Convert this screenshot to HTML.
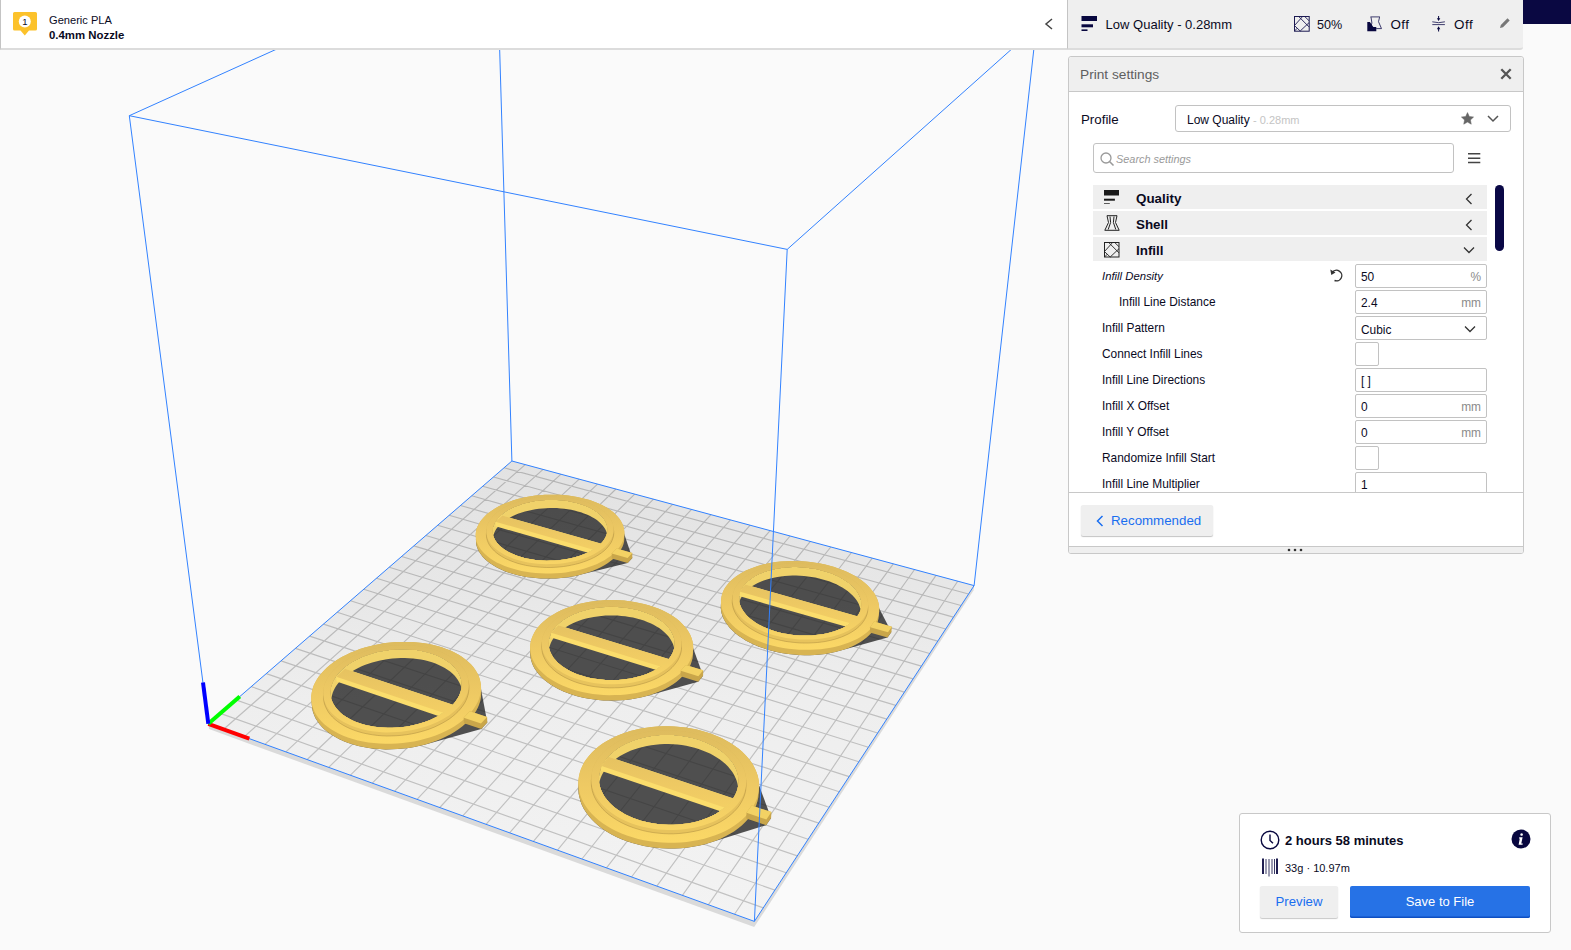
<!DOCTYPE html>
<html><head><meta charset="utf-8">
<style>
*{box-sizing:border-box;margin:0;padding:0}
html,body{width:1571px;height:950px;overflow:hidden;background:#fafafa;font-family:"Liberation Sans",sans-serif;color:#0a0a1e}
.abs{position:absolute}
#hdrL{left:0;top:0;width:1067px;height:50px;background:#fff;border-left:1px solid #c4c4c4;border-bottom:2px solid #dcdcdc}
#hdrR{left:1067px;top:0;width:456px;height:50px;background:#efefef;border-left:1px solid #c4c4c4;border-bottom:2px solid #dcdcdc;border-bottom-right-radius:3px}
#navy{left:1523px;top:0;width:48px;height:24px;background:#0a0842}
.t{position:absolute;white-space:nowrap;line-height:1}
#panel{left:1068px;top:56px;width:456px;height:498px;background:#fff;border:1px solid #c8c8c8;border-radius:3px}
#ptitle{left:0;top:0;width:454px;height:35px;background:#efefef;border-bottom:1px solid #c8c8c8;border-radius:3px 3px 0 0}
.field{position:absolute;border:1px solid #c2c2c2;border-radius:2px;background:#fff}
.cat{position:absolute;left:24px;width:394px;height:24px;background:#efefef}
.lab{position:absolute;font-size:11.9px;color:#0a0a1e;white-space:nowrap;line-height:1}
#card{left:1239px;top:813px;width:312px;height:120px;background:#fff;border:1px solid #c8c8c8;border-radius:3px}
</style></head><body>
<svg width="1571" height="950" viewBox="0 0 1571 950" style="position:absolute;left:0;top:0">
<defs><linearGradient id="plateg" x1="0" y1="461" x2="0" y2="921" gradientUnits="userSpaceOnUse"><stop offset="0" stop-color="#e2e2e2"/><stop offset="0.27" stop-color="#e7e7e7"/><stop offset="0.52" stop-color="#eeeeee"/><stop offset="1" stop-color="#f3f3f3"/></linearGradient>
<linearGradient id="rg0" x1="0" y1="494.7" x2="0" y2="573.5" gradientUnits="userSpaceOnUse"><stop offset="0" stop-color="#ddbb5e"/><stop offset="0.5" stop-color="#eec963"/><stop offset="1" stop-color="#fbd866"/></linearGradient><clipPath id="hc0"><path d="M600.7,543.8L602.4,542.0L603.8,540.1L605.0,538.2L606.0,536.3L606.7,534.3L607.2,532.3L607.5,530.3L607.5,528.3L607.2,526.3L606.7,524.4L606.0,522.5L605.0,520.6L603.8,518.7L602.4,516.9L600.7,515.2L598.9,513.5L596.8,511.9L594.6,510.4L592.2,509.0L589.6,507.6L586.8,506.4L583.9,505.2L580.9,504.2L577.7,503.2L574.4,502.4L571.1,501.7L567.6,501.1L564.1,500.6L560.5,500.2L556.9,500.0L553.3,499.9L549.6,499.9L545.9,500.0L542.3,500.3L538.7,500.6L535.1,501.1L531.6,501.8L528.2,502.5L524.8,503.3L521.6,504.3L518.4,505.4L515.4,506.5L512.5,507.8L509.8,509.2L507.3,510.6L504.9,512.1L502.7,513.8L500.7,515.4L498.9,517.2L497.3,519.0L495.9,520.8L494.8,522.7L493.9,524.7L493.2,526.6L492.8,528.6L492.6,530.6L492.6,532.6L492.9,534.6L493.5,536.5L494.3,538.5L495.3,540.4L496.6,542.3L498.1,544.1L499.9,545.9L501.8,547.6L504.0,549.2L506.4,550.7L509.0,552.2L511.8,553.5L514.7,554.8L517.8,555.9L521.1,557.0L524.5,557.9L528.0,558.7L531.6,559.3L535.3,559.9L539.0,560.3L542.9,560.5L546.7,560.7L550.6,560.6L554.4,560.5L558.3,560.2L562.1,559.8L565.8,559.2L569.5,558.6L573.0,557.8L576.5,556.8L579.9,555.8L583.1,554.6L586.2,553.3L589.1,552.0L591.8,550.5L594.3,548.9L596.6,547.3L598.8,545.6Z"/></clipPath><linearGradient id="rg1" x1="0" y1="561.0" x2="0" y2="649.8" gradientUnits="userSpaceOnUse"><stop offset="0" stop-color="#ddbb5e"/><stop offset="0.5" stop-color="#eec963"/><stop offset="1" stop-color="#fbd866"/></linearGradient><clipPath id="hc1"><path d="M857.2,616.6L858.5,614.6L859.6,612.4L860.5,610.3L861.0,608.1L861.4,605.9L861.4,603.6L861.2,601.4L860.7,599.1L860.0,596.9L859.0,594.7L857.8,592.5L856.3,590.4L854.6,588.3L852.7,586.3L850.5,584.4L848.2,582.5L845.6,580.7L842.9,579.0L840.0,577.3L837.0,575.8L833.7,574.4L830.4,573.1L826.9,571.9L823.4,570.9L819.7,570.0L816.0,569.1L812.2,568.5L808.3,567.9L804.5,567.5L800.6,567.3L796.7,567.1L792.8,567.1L788.9,567.3L785.1,567.6L781.4,568.0L777.7,568.6L774.2,569.3L770.7,570.1L767.3,571.0L764.1,572.1L761.0,573.3L758.1,574.6L755.3,576.0L752.8,577.6L750.4,579.2L748.2,580.9L746.2,582.7L744.5,584.6L743.0,586.6L741.7,588.6L740.7,590.7L739.9,592.9L739.4,595.0L739.1,597.2L739.1,599.5L739.3,601.7L739.8,604.0L740.6,606.2L741.6,608.4L742.9,610.6L744.5,612.8L746.3,614.9L748.3,616.9L750.5,618.9L753.0,620.8L755.7,622.7L758.6,624.4L761.7,626.0L764.9,627.6L768.4,629.0L771.9,630.3L775.6,631.5L779.4,632.5L783.4,633.4L787.3,634.1L791.4,634.7L795.5,635.2L799.6,635.5L803.7,635.6L807.8,635.6L811.9,635.4L815.9,635.1L819.8,634.6L823.7,634.0L827.4,633.3L831.0,632.3L834.5,631.3L837.8,630.1L841.0,628.8L843.9,627.4L846.7,625.8L849.3,624.1L851.6,622.4L853.7,620.5L855.5,618.6Z"/></clipPath><linearGradient id="rg2" x1="0" y1="600.1" x2="0" y2="695.2" gradientUnits="userSpaceOnUse"><stop offset="0" stop-color="#ddbb5e"/><stop offset="0.5" stop-color="#eec963"/><stop offset="1" stop-color="#fbd866"/></linearGradient><clipPath id="hc2"><path d="M668.1,659.7L669.9,657.5L671.3,655.3L672.6,652.9L673.5,650.6L674.2,648.2L674.6,645.8L674.7,643.4L674.6,641.0L674.2,638.6L673.5,636.3L672.6,634.0L671.4,631.7L670.0,629.5L668.3,627.3L666.4,625.2L664.2,623.2L661.9,621.3L659.3,619.4L656.6,617.7L653.7,616.1L650.6,614.6L647.3,613.2L643.9,612.0L640.4,610.8L636.8,609.8L633.0,609.0L629.2,608.2L625.3,607.7L621.4,607.2L617.4,607.0L613.4,606.8L609.4,606.8L605.4,607.0L601.4,607.3L597.5,607.7L593.6,608.3L589.8,609.1L586.1,610.0L582.5,611.0L579.0,612.1L575.6,613.4L572.3,614.8L569.3,616.3L566.4,618.0L563.6,619.7L561.1,621.6L558.8,623.5L556.7,625.5L554.8,627.6L553.2,629.8L551.7,632.0L550.6,634.3L549.7,636.6L549.1,639.0L548.7,641.4L548.6,643.8L548.8,646.2L549.2,648.6L549.9,650.9L550.9,653.3L552.1,655.6L553.6,657.9L555.4,660.1L557.4,662.2L559.7,664.2L562.2,666.2L564.9,668.1L567.8,669.8L570.9,671.5L574.3,673.0L577.7,674.4L581.4,675.6L585.2,676.7L589.1,677.7L593.1,678.5L597.2,679.1L601.3,679.6L605.6,679.9L609.8,680.1L614.0,680.1L618.3,679.9L622.5,679.6L626.6,679.0L630.7,678.4L634.7,677.5L638.6,676.6L642.4,675.4L646.0,674.2L649.5,672.8L652.8,671.2L655.9,669.6L658.8,667.8L661.5,665.9L663.9,663.9L666.1,661.9Z"/></clipPath><linearGradient id="rg3" x1="0" y1="641.9" x2="0" y2="743.8" gradientUnits="userSpaceOnUse"><stop offset="0" stop-color="#ddbb5e"/><stop offset="0.5" stop-color="#eec963"/><stop offset="1" stop-color="#fbd866"/></linearGradient><clipPath id="hc3"><path d="M451.7,705.9L453.9,703.6L455.8,701.1L457.5,698.6L458.9,696.1L460.0,693.6L460.8,691.0L461.4,688.4L461.6,685.9L461.6,683.3L461.4,680.8L460.8,678.3L460.0,675.8L458.9,673.5L457.5,671.2L455.9,668.9L454.0,666.8L451.9,664.7L449.6,662.7L447.1,660.9L444.3,659.2L441.4,657.5L438.3,656.1L435.0,654.7L431.5,653.5L428.0,652.4L424.2,651.5L420.4,650.7L416.5,650.1L412.5,649.7L408.4,649.4L404.3,649.2L400.2,649.2L396.0,649.4L391.8,649.7L387.7,650.2L383.5,650.9L379.5,651.6L375.5,652.6L371.5,653.7L367.7,654.9L364.0,656.3L360.4,657.8L356.9,659.4L353.6,661.2L350.5,663.0L347.6,665.0L344.8,667.1L342.3,669.2L340.0,671.5L337.9,673.8L336.0,676.2L334.4,678.7L333.1,681.2L332.0,683.7L331.2,686.2L330.7,688.8L330.4,691.4L330.4,694.0L330.7,696.5L331.3,699.0L332.2,701.5L333.4,703.9L334.8,706.3L336.5,708.6L338.5,710.8L340.7,712.9L343.2,714.9L345.9,716.8L348.9,718.5L352.1,720.2L355.4,721.7L359.0,723.0L362.7,724.2L366.6,725.2L370.6,726.1L374.7,726.8L379.0,727.3L383.3,727.6L387.6,727.8L392.1,727.8L396.5,727.6L400.9,727.2L405.3,726.7L409.6,726.0L413.9,725.1L418.1,724.0L422.2,722.8L426.2,721.4L430.1,719.9L433.7,718.3L437.3,716.5L440.6,714.6L443.7,712.6L446.6,710.4L449.3,708.2Z"/></clipPath><linearGradient id="rg4" x1="0" y1="726.2" x2="0" y2="842.8" gradientUnits="userSpaceOnUse"><stop offset="0" stop-color="#ddbb5e"/><stop offset="0.5" stop-color="#eec963"/><stop offset="1" stop-color="#fbd866"/></linearGradient><clipPath id="hc4"><path d="M732.2,799.7L734.0,797.0L735.5,794.2L736.7,791.4L737.6,788.5L738.2,785.5L738.6,782.6L738.6,779.7L738.3,776.7L737.7,773.8L736.8,770.9L735.7,768.1L734.2,765.3L732.5,762.6L730.6,759.9L728.3,757.4L725.9,754.9L723.2,752.6L720.2,750.3L717.1,748.2L713.8,746.2L710.3,744.4L706.6,742.7L702.8,741.2L698.9,739.8L694.8,738.6L690.6,737.5L686.4,736.7L682.1,736.0L677.7,735.4L673.3,735.1L668.8,734.9L664.4,734.9L660.0,735.1L655.6,735.5L651.3,736.1L647.1,736.8L642.9,737.7L638.8,738.8L634.9,740.0L631.0,741.4L627.4,743.0L623.9,744.7L620.5,746.5L617.4,748.5L614.5,750.7L611.8,752.9L609.3,755.3L607.0,757.8L605.1,760.3L603.3,763.0L601.9,765.7L600.7,768.5L599.8,771.4L599.2,774.3L598.9,777.2L598.9,780.1L599.2,783.1L599.8,786.0L600.7,788.9L601.9,791.8L603.3,794.6L605.1,797.4L607.2,800.1L609.5,802.7L612.1,805.3L615.0,807.7L618.1,810.0L621.4,812.1L624.9,814.2L628.7,816.0L632.6,817.7L636.7,819.3L641.0,820.7L645.4,821.8L649.8,822.8L654.4,823.6L659.1,824.2L663.8,824.6L668.5,824.8L673.2,824.8L677.9,824.6L682.6,824.1L687.2,823.5L691.7,822.7L696.1,821.7L700.3,820.5L704.4,819.1L708.4,817.5L712.2,815.8L715.7,813.9L719.1,811.8L722.2,809.6L725.1,807.3L727.7,804.9L730.1,802.3Z"/></clipPath></defs>
<path d="M208.3,723.8L511.9,461.0L974.1,585.6L973.5,590.5L754.2,927.1L209.0,729.1Z" fill="#dadada"/>
<path d="M208.3,723.8L754.4,921.4L974.1,585.6L511.9,461.0Z" fill="url(#plateg)"/>
<path d="M223.6,729.3L525.2,464.6M220.3,713.4L763.3,907.9M244.2,736.7L543.1,469.4M235.9,699.9L774.9,890.1M264.9,744.3L561.0,474.2M251.3,686.6L786.2,872.8M285.9,751.9L579.2,479.1M266.3,673.6L797.3,855.9M307.2,759.5L597.5,484.1M281.0,660.9L808.1,839.3M328.7,767.3L616.0,489.0M295.5,648.4L818.7,823.1M350.4,775.2L634.7,494.1M309.6,636.1L829.1,807.3M372.3,783.1L653.5,499.1M323.5,624.1L839.2,791.8M394.6,791.2L672.5,504.3M337.2,612.3L849.1,776.6M417.0,799.3L691.6,509.4M350.5,600.7L858.8,761.8M439.8,807.5L711.0,514.6M363.7,589.3L868.3,747.3M462.8,815.9L730.5,519.9M376.5,578.2L877.6,733.0M486.0,824.3L750.2,525.2M389.2,567.2L886.8,719.1M509.6,832.8L770.1,530.6M401.6,556.5L895.7,705.4M533.4,841.4L790.1,536.0M413.8,545.9L904.4,692.1M557.5,850.2L810.4,541.4M425.8,535.5L913.0,678.9M581.9,859.0L830.8,547.0M437.6,525.3L921.4,666.1M606.5,867.9L851.5,552.5M449.1,515.3L929.6,653.5M631.5,877.0L872.3,558.1M460.5,505.5L937.7,641.1M656.8,886.1L893.3,563.8M471.7,495.8L945.7,629.0M682.4,895.4L914.6,569.5M482.7,486.3L953.4,617.1M708.3,904.8L936.0,575.3M493.5,477.0L961.1,605.5M734.5,914.2L957.7,581.2M504.1,467.8L968.5,594.0" stroke="#000" stroke-opacity="0.2" stroke-width="1.15" fill="none"/>
<path d="M486.7,519.6L484.3,521.8L482.3,524.2L480.5,526.6L479.0,529.0L477.7,531.5L476.8,534.1L476.2,536.7L476.0,539.2L476.0,541.8L476.3,544.4L477.0,547.0L478.0,549.5L479.3,552.0L481.0,554.5L482.9,556.9L485.1,559.2L487.7,561.4L490.5,563.5L493.6,565.5L496.9,567.5L500.5,569.2L504.3,570.9L508.3,572.4L512.6,573.8L517.0,575.0L521.5,576.0L526.2,576.9L531.0,577.6L535.9,578.1L540.9,578.5L545.9,578.6L550.9,578.6L555.9,578.4L560.9,578.0L565.8,577.5L570.7,576.8L575.5,575.9L580.1,574.8L627.6,563.0L632.3,558.1L623.3,531.2L622.3,528.7L621.0,526.2L619.4,523.8L617.5,521.5L615.4,519.3L613.0,517.1L610.3,515.0L607.4,513.1L604.3,511.2L600.9,509.5L597.4,507.9L593.7,506.4L589.8,505.1L585.7,503.8L581.5,502.8L577.2,501.9L572.7,501.1L568.2,500.5L563.6,500.0L559.0,499.7L554.3,499.6L549.6,499.6L544.9,499.7L540.2,500.1L535.6,500.6L531.0,501.2L526.5,502.0L522.1,502.9L517.8,504.0L513.6,505.2L509.6,506.6L505.7,508.1L502.0,509.7L498.5,511.5L495.2,513.4L492.1,515.3L489.3,517.4Z" fill="#242424" fill-opacity="0.79"/>
<path d="M475.7,534.2L476.0,531.6L476.6,529.1L477.5,526.5L478.8,524.0L480.3,521.6L482.1,519.2L484.1,516.9L486.5,514.6L489.1,512.5L492.0,510.4L495.0,508.4L498.4,506.5L501.9,504.8L505.6,503.2L509.5,501.7L513.5,500.3L517.7,499.1L522.0,498.0L526.4,497.1L530.9,496.3L535.5,495.6L540.1,495.2L544.8,494.8L549.5,494.7L554.2,494.7L558.9,494.8L563.5,495.1L568.1,495.6L572.7,496.2L577.1,496.9L581.4,497.9L585.6,498.9L589.7,500.1L593.6,501.5L597.4,502.9L600.9,504.6L604.3,506.3L607.4,508.1L610.3,510.1L613.0,512.1L615.4,514.3L617.5,516.5L619.4,518.8L621.0,521.2L622.3,523.7L623.3,526.2L623.9,528.7L624.3,531.3L624.4,533.8L624.3,538.9L624.1,541.4L623.5,544.0L622.6,546.6L621.3,549.1L619.8,551.7L618.0,554.1L615.8,556.5L613.4,558.8L610.6,561.1L607.6,563.2L604.4,565.3L600.8,567.2L597.1,569.0L593.1,570.7L589.0,572.2L584.6,573.6L580.1,574.8L575.5,575.9L570.7,576.8L565.8,577.5L560.9,578.0L555.9,578.4L550.9,578.6L545.9,578.6L540.9,578.5L535.9,578.1L531.0,577.6L526.2,576.9L521.5,576.0L517.0,575.0L512.6,573.8L508.3,572.4L504.3,570.9L500.5,569.2L496.9,567.5L493.6,565.5L490.5,563.5L487.7,561.4L485.1,559.2L482.9,556.9L481.0,554.5L479.3,552.0L478.0,549.5L477.0,547.0L476.3,544.4L476.0,541.8L475.8,536.8Z M600.7,543.8L602.4,542.0L603.8,540.1L605.0,538.2L606.0,536.3L606.7,534.3L607.2,532.3L607.5,530.3L607.5,528.3L607.2,526.3L606.7,524.4L606.0,522.5L605.0,520.6L603.8,518.7L602.4,516.9L600.7,515.2L598.9,513.5L596.8,511.9L594.6,510.4L592.2,509.0L589.6,507.6L586.8,506.4L583.9,505.2L580.9,504.2L577.7,503.2L574.4,502.4L571.1,501.7L567.6,501.1L564.1,500.6L560.5,500.2L556.9,500.0L553.3,499.9L549.6,499.9L545.9,500.0L542.3,500.3L538.7,500.6L535.1,501.1L531.6,501.8L528.2,502.5L524.8,503.3L521.6,504.3L518.4,505.4L515.4,506.5L512.5,507.8L509.8,509.2L507.3,510.6L504.9,512.1L502.7,513.8L500.7,515.4L498.9,517.2L497.3,519.0L495.9,520.8L494.8,522.7L493.9,524.7L493.2,526.6L492.8,528.6L492.6,530.6L492.6,532.6L492.9,534.6L493.5,536.5L494.3,538.5L495.3,540.4L496.6,542.3L498.1,544.1L499.9,545.9L501.8,547.6L504.0,549.2L506.4,550.7L509.0,552.2L511.8,553.5L514.7,554.8L517.8,555.9L521.1,557.0L524.5,557.9L528.0,558.7L531.6,559.3L535.3,559.9L539.0,560.3L542.9,560.5L546.7,560.7L550.6,560.6L554.4,560.5L558.3,560.2L562.1,559.8L565.8,559.2L569.5,558.6L573.0,557.8L576.5,556.8L579.9,555.8L583.1,554.6L586.2,553.3L589.1,552.0L591.8,550.5L594.3,548.9L596.6,547.3L598.8,545.6Z" fill-rule="evenodd" fill="#d8b452"/>
<path d="M615.8,551.4L618.0,549.0L619.8,546.6L621.4,544.1L622.6,541.6L623.5,539.0L624.1,536.4L624.4,533.8L624.3,531.3L623.9,528.7L623.3,526.2L622.3,523.7L621.0,521.2L619.4,518.8L617.5,516.5L615.4,514.3L613.0,512.1L610.3,510.1L607.4,508.1L604.3,506.3L600.9,504.6L597.4,502.9L593.6,501.5L589.7,500.1L585.6,498.9L581.4,497.9L577.1,496.9L572.7,496.2L568.1,495.6L563.5,495.1L558.9,494.8L554.2,494.7L549.5,494.7L544.8,494.8L540.1,495.2L535.5,495.6L530.9,496.3L526.4,497.1L522.0,498.0L517.7,499.1L513.5,500.3L509.5,501.7L505.6,503.2L501.9,504.8L498.4,506.5L495.0,508.4L492.0,510.4L489.1,512.5L486.5,514.6L484.1,516.9L482.1,519.2L480.3,521.6L478.8,524.0L477.5,526.5L476.6,529.1L476.0,531.6L475.7,534.2L475.8,536.8L476.1,539.4L476.8,541.9L477.8,544.5L479.1,547.0L480.8,549.4L482.7,551.8L484.9,554.1L487.5,556.3L490.3,558.4L493.4,560.4L496.7,562.4L500.3,564.1L504.1,565.8L508.2,567.3L512.4,568.6L516.8,569.8L521.4,570.9L526.1,571.8L530.9,572.5L535.8,573.0L540.7,573.3L545.8,573.5L550.8,573.5L555.8,573.3L560.8,572.9L565.8,572.4L570.6,571.6L575.4,570.7L580.1,569.7L584.6,568.5L588.9,567.1L593.1,565.5L597.1,563.9L600.8,562.1L604.4,560.2L607.6,558.1L610.6,556.0L613.4,553.7Z M600.7,543.8L602.4,542.0L603.8,540.1L605.0,538.2L606.0,536.3L606.7,534.3L607.2,532.3L607.5,530.3L607.5,528.3L607.2,526.3L606.7,524.4L606.0,522.5L605.0,520.6L603.8,518.7L602.4,516.9L600.7,515.2L598.9,513.5L596.8,511.9L594.6,510.4L592.2,509.0L589.6,507.6L586.8,506.4L583.9,505.2L580.9,504.2L577.7,503.2L574.4,502.4L571.1,501.7L567.6,501.1L564.1,500.6L560.5,500.2L556.9,500.0L553.3,499.9L549.6,499.9L545.9,500.0L542.3,500.3L538.7,500.6L535.1,501.1L531.6,501.8L528.2,502.5L524.8,503.3L521.6,504.3L518.4,505.4L515.4,506.5L512.5,507.8L509.8,509.2L507.3,510.6L504.9,512.1L502.7,513.8L500.7,515.4L498.9,517.2L497.3,519.0L495.9,520.8L494.8,522.7L493.9,524.7L493.2,526.6L492.8,528.6L492.6,530.6L492.6,532.6L492.9,534.6L493.5,536.5L494.3,538.5L495.3,540.4L496.6,542.3L498.1,544.1L499.9,545.9L501.8,547.6L504.0,549.2L506.4,550.7L509.0,552.2L511.8,553.5L514.7,554.8L517.8,555.9L521.1,557.0L524.5,557.9L528.0,558.7L531.6,559.3L535.3,559.9L539.0,560.3L542.9,560.5L546.7,560.7L550.6,560.6L554.4,560.5L558.3,560.2L562.1,559.8L565.8,559.2L569.5,558.6L573.0,557.8L576.5,556.8L579.9,555.8L583.1,554.6L586.2,553.3L589.1,552.0L591.8,550.5L594.3,548.9L596.6,547.3L598.8,545.6Z" fill-rule="evenodd" fill="url(#rg0)"/>
<path d="M486.3,530.7L486.5,528.5L487.0,526.3L487.8,524.2L488.8,522.0L490.1,519.9L491.6,517.9L493.4,515.9L495.4,513.9L497.6,512.1L500.0,510.3L502.7,508.6L505.5,507.0L508.5,505.5L511.7,504.1L515.0,502.8L518.5,501.6L522.1,500.6L525.8,499.6L529.6,498.8L533.5,498.1L537.5,497.6L541.5,497.2L545.5,496.9L549.5,496.8L553.6,496.7L557.6,496.9L561.6,497.1L565.6,497.5L569.5,498.1L573.3,498.7L577.0,499.5L580.7,500.4L584.2,501.5L587.5,502.6L590.7,503.9L593.8,505.3L596.7,506.8L599.4,508.4L601.8,510.0L604.1,511.8L606.2,513.7L608.0,515.6L609.6,517.6L610.9,519.6L612.0,521.7L612.8,523.8L613.4,526.0L613.7,528.2L613.7,530.4L613.7,533.7L613.5,535.9L612.9,538.1L612.1,540.3L611.1,542.5L609.7,544.6L608.1,546.7L606.3,548.7L604.2,550.7L601.8,552.6L599.2,554.4L596.4,556.2L593.4,557.8L590.2,559.3L586.8,560.7L583.2,562.0L579.5,563.2L575.7,564.2L571.7,565.1L567.6,565.9L563.5,566.5L559.2,567.0L555.0,567.3L550.7,567.5L546.4,567.5L542.1,567.3L537.9,567.0L533.7,566.6L529.6,566.0L525.6,565.3L521.7,564.4L517.9,563.4L514.3,562.2L510.9,560.9L507.6,559.5L504.5,558.0L501.7,556.4L499.0,554.7L496.6,552.9L494.4,551.0L492.5,549.0L490.8,547.0L489.4,544.9L488.3,542.8L487.4,540.6L486.8,538.4L486.5,536.2L486.3,532.9Z M600.7,543.8L602.4,542.0L603.8,540.1L605.0,538.2L606.0,536.3L606.7,534.3L607.2,532.3L607.5,530.3L607.5,528.3L607.2,526.3L606.7,524.4L606.0,522.5L605.0,520.6L603.8,518.7L602.4,516.9L600.7,515.2L598.9,513.5L596.8,511.9L594.6,510.4L592.2,509.0L589.6,507.6L586.8,506.4L583.9,505.2L580.9,504.2L577.7,503.2L574.4,502.4L571.1,501.7L567.6,501.1L564.1,500.6L560.5,500.2L556.9,500.0L553.3,499.9L549.6,499.9L545.9,500.0L542.3,500.3L538.7,500.6L535.1,501.1L531.6,501.8L528.2,502.5L524.8,503.3L521.6,504.3L518.4,505.4L515.4,506.5L512.5,507.8L509.8,509.2L507.3,510.6L504.9,512.1L502.7,513.8L500.7,515.4L498.9,517.2L497.3,519.0L495.9,520.8L494.8,522.7L493.9,524.7L493.2,526.6L492.8,528.6L492.6,530.6L492.6,532.6L492.9,534.6L493.5,536.5L494.3,538.5L495.3,540.4L496.6,542.3L498.1,544.1L499.9,545.9L501.8,547.6L504.0,549.2L506.4,550.7L509.0,552.2L511.8,553.5L514.7,554.8L517.8,555.9L521.1,557.0L524.5,557.9L528.0,558.7L531.6,559.3L535.3,559.9L539.0,560.3L542.9,560.5L546.7,560.7L550.6,560.6L554.4,560.5L558.3,560.2L562.1,559.8L565.8,559.2L569.5,558.6L573.0,557.8L576.5,556.8L579.9,555.8L583.1,554.6L586.2,553.3L589.1,552.0L591.8,550.5L594.3,548.9L596.6,547.3L598.8,545.6Z" fill-rule="evenodd" fill="#d9b556" fill-opacity="0.55"/>
<path d="M606.3,548.7L608.1,546.7L609.7,544.6L611.1,542.5L612.1,540.3L612.9,538.1L613.5,535.9L613.7,533.7L613.7,531.5L613.4,529.3L612.8,527.1L612.0,525.0L610.9,522.9L609.6,520.8L608.0,518.8L606.2,516.9L604.1,515.0L601.9,513.3L599.4,511.6L596.7,510.0L593.8,508.5L590.8,507.1L587.5,505.8L584.2,504.7L580.7,503.6L577.1,502.7L573.3,501.9L569.5,501.3L565.6,500.7L561.7,500.3L557.7,500.1L553.6,499.9L549.6,500.0L545.6,500.1L541.5,500.4L537.5,500.8L533.6,501.4L529.7,502.0L525.9,502.8L522.2,503.8L518.6,504.8L515.1,506.0L511.8,507.3L508.6,508.7L505.6,510.2L502.8,511.8L500.1,513.5L497.7,515.3L495.5,517.2L493.5,519.1L491.7,521.1L490.2,523.2L488.9,525.3L487.9,527.4L487.1,529.6L486.6,531.8L486.4,534.0L486.5,536.2L486.8,538.4L487.4,540.6L488.3,542.8L489.4,544.9L490.8,547.0L492.5,549.0L494.4,551.0L496.6,552.9L499.0,554.7L501.7,556.4L504.5,558.0L507.6,559.5L510.9,560.9L514.3,562.2L517.9,563.4L521.7,564.4L525.6,565.3L529.6,566.0L533.7,566.6L537.9,567.0L542.1,567.3L546.4,567.5L550.7,567.5L555.0,567.3L559.2,567.0L563.5,566.5L567.6,565.9L571.7,565.1L575.7,564.2L579.5,563.2L583.2,562.0L586.8,560.7L590.2,559.3L593.4,557.8L596.4,556.2L599.2,554.4L601.8,552.6L604.2,550.7Z" fill="none" stroke="#a88a3e" stroke-width="0.8" stroke-opacity="0.6"/>
<path d="M606.3,545.4L608.1,543.4L609.7,541.3L611.1,539.2L612.1,537.0L612.9,534.8L613.5,532.6L613.7,530.4L613.7,528.2L613.4,526.0L612.8,523.8L612.0,521.7L610.9,519.6L609.6,517.6L608.0,515.6L606.2,513.7L604.1,511.8L601.8,510.0L599.4,508.4L596.7,506.8L593.8,505.3L590.7,503.9L587.5,502.6L584.2,501.5L580.7,500.4L577.0,499.5L573.3,498.7L569.5,498.1L565.6,497.5L561.6,497.1L557.6,496.9L553.6,496.7L549.5,496.8L545.5,496.9L541.5,497.2L537.5,497.6L533.5,498.1L529.6,498.8L525.8,499.6L522.1,500.6L518.5,501.6L515.0,502.8L511.7,504.1L508.5,505.5L505.5,507.0L502.7,508.6L500.0,510.3L497.6,512.1L495.4,513.9L493.4,515.9L491.6,517.9L490.1,519.9L488.8,522.0L487.8,524.2L487.0,526.3L486.5,528.5L486.3,530.7L486.3,532.9L486.7,535.1L487.3,537.3L488.1,539.5L489.3,541.6L490.7,543.7L492.4,545.7L494.3,547.7L496.5,549.6L498.9,551.4L501.5,553.1L504.4,554.7L507.5,556.2L510.8,557.6L514.2,558.9L517.8,560.0L521.6,561.1L525.5,561.9L529.5,562.7L533.6,563.3L537.8,563.7L542.1,564.0L546.3,564.2L550.6,564.1L554.9,564.0L559.2,563.7L563.4,563.2L567.6,562.6L571.6,561.8L575.6,560.9L579.5,559.9L583.2,558.7L586.8,557.4L590.2,556.0L593.4,554.5L596.4,552.8L599.2,551.1L601.8,549.3L604.2,547.4Z M600.7,543.8L602.4,542.0L603.8,540.1L605.0,538.2L606.0,536.3L606.7,534.3L607.2,532.3L607.5,530.3L607.5,528.3L607.2,526.3L606.7,524.4L606.0,522.5L605.0,520.6L603.8,518.7L602.4,516.9L600.7,515.2L598.9,513.5L596.8,511.9L594.6,510.4L592.2,509.0L589.6,507.6L586.8,506.4L583.9,505.2L580.9,504.2L577.7,503.2L574.4,502.4L571.1,501.7L567.6,501.1L564.1,500.6L560.5,500.2L556.9,500.0L553.3,499.9L549.6,499.9L545.9,500.0L542.3,500.3L538.7,500.6L535.1,501.1L531.6,501.8L528.2,502.5L524.8,503.3L521.6,504.3L518.4,505.4L515.4,506.5L512.5,507.8L509.8,509.2L507.3,510.6L504.9,512.1L502.7,513.8L500.7,515.4L498.9,517.2L497.3,519.0L495.9,520.8L494.8,522.7L493.9,524.7L493.2,526.6L492.8,528.6L492.6,530.6L492.6,532.6L492.9,534.6L493.5,536.5L494.3,538.5L495.3,540.4L496.6,542.3L498.1,544.1L499.9,545.9L501.8,547.6L504.0,549.2L506.4,550.7L509.0,552.2L511.8,553.5L514.7,554.8L517.8,555.9L521.1,557.0L524.5,557.9L528.0,558.7L531.6,559.3L535.3,559.9L539.0,560.3L542.9,560.5L546.7,560.7L550.6,560.6L554.4,560.5L558.3,560.2L562.1,559.8L565.8,559.2L569.5,558.6L573.0,557.8L576.5,556.8L579.9,555.8L583.1,554.6L586.2,553.3L589.1,552.0L591.8,550.5L594.3,548.9L596.6,547.3L598.8,545.6Z" fill-rule="evenodd" fill="url(#rg0)"/>
<path d="M600.7,543.8L602.4,542.0L603.8,540.1L605.0,538.2L606.0,536.3L606.7,534.3L607.2,532.3L607.5,530.3L607.5,528.3L607.2,526.3L606.7,524.4L606.0,522.5L605.0,520.6L603.8,518.7L602.4,516.9L600.7,515.2L598.9,513.5L596.8,511.9L594.6,510.4L592.2,509.0L589.6,507.6L586.8,506.4L583.9,505.2L580.9,504.2L577.7,503.2L574.4,502.4L571.1,501.7L567.6,501.1L564.1,500.6L560.5,500.2L556.9,500.0L553.3,499.9L549.6,499.9L545.9,500.0L542.3,500.3L538.7,500.6L535.1,501.1L531.6,501.8L528.2,502.5L524.8,503.3L521.6,504.3L518.4,505.4L515.4,506.5L512.5,507.8L509.8,509.2L507.3,510.6L504.9,512.1L502.7,513.8L500.7,515.4L498.9,517.2L497.3,519.0L495.9,520.8L494.8,522.7L493.9,524.7L493.2,526.6L492.8,528.6L492.6,530.6L492.6,532.6L492.9,534.6L493.5,536.5L494.3,538.5L495.3,540.4L496.6,542.3L498.1,544.1L499.9,545.9L501.8,547.6L504.0,549.2L506.4,550.7L509.0,552.2L511.8,553.5L514.7,554.8L517.8,555.9L521.1,557.0L524.5,557.9L528.0,558.7L531.6,559.3L535.3,559.9L539.0,560.3L542.9,560.5L546.7,560.7L550.6,560.6L554.4,560.5L558.3,560.2L562.1,559.8L565.8,559.2L569.5,558.6L573.0,557.8L576.5,556.8L579.9,555.8L583.1,554.6L586.2,553.3L589.1,552.0L591.8,550.5L594.3,548.9L596.6,547.3L598.8,545.6Z M600.7,552.2L602.4,550.4L603.8,548.5L605.0,546.5L606.0,544.6L606.8,542.6L607.2,540.6L607.5,538.6L607.5,536.6L607.2,534.6L606.7,532.7L606.0,530.7L605.0,528.8L603.8,527.0L602.4,525.2L600.8,523.4L598.9,521.7L596.9,520.1L594.6,518.6L592.2,517.2L589.6,515.8L586.9,514.5L584.0,513.4L581.0,512.3L577.8,511.4L574.5,510.5L571.2,509.8L567.7,509.2L564.2,508.7L560.6,508.4L557.0,508.1L553.4,508.0L549.7,508.0L546.1,508.2L542.5,508.4L538.9,508.8L535.3,509.3L531.8,509.9L528.4,510.7L525.0,511.5L521.8,512.5L518.6,513.5L515.6,514.7L512.8,516.0L510.1,517.4L507.5,518.8L505.1,520.4L503.0,522.0L501.0,523.7L499.2,525.4L497.6,527.2L496.2,529.1L495.1,531.0L494.2,532.9L493.5,534.9L493.1,536.9L492.9,538.9L492.9,540.9L493.2,542.9L493.8,544.9L494.6,546.8L495.6,548.7L496.9,550.6L498.4,552.5L500.1,554.2L502.1,555.9L504.3,557.6L506.7,559.1L509.3,560.6L512.0,561.9L515.0,563.2L518.1,564.3L521.3,565.4L524.7,566.3L528.2,567.1L531.8,567.8L535.5,568.3L539.2,568.7L543.0,569.0L546.9,569.1L550.7,569.1L554.6,568.9L558.4,568.6L562.2,568.2L565.9,567.7L569.6,567.0L573.1,566.2L576.6,565.2L580.0,564.2L583.2,563.0L586.2,561.7L589.1,560.4L591.8,558.9L594.4,557.3L596.7,555.7L598.8,554.0Z" fill-rule="evenodd" fill="#f0d26a" clip-path="url(#hc0)"/>
<g clip-path="url(#hc0)"><path d="M495.5,521.8L502.4,515.6L605.9,545.0L605.9,549.5L599.4,556.0L495.6,526.3Z" fill="#fbdd6c"/><path d="M495.5,521.8L599.4,551.5L605.9,545.0L502.4,515.6Z" fill="url(#rg0)"/></g>
<path d="M611.8,553.4L616.6,548.5L632.3,553.0L632.3,558.1L627.6,563.0L611.8,558.5Z" fill="#c9a64a"/><path d="M611.8,553.4L627.6,557.9L632.3,553.0L616.6,548.5Z" fill="#f3d264"/>
<path d="M728.1,588.6L726.1,591.1L724.4,593.7L723.1,596.4L722.0,599.2L721.3,602.0L720.9,604.9L720.8,607.8L721.1,610.7L721.7,613.6L722.7,616.5L724.0,619.4L725.6,622.3L727.6,625.1L729.8,627.9L732.4,630.6L735.3,633.2L738.5,635.7L742.0,638.1L745.7,640.4L749.7,642.5L753.9,644.6L758.3,646.4L763.0,648.1L767.8,649.7L772.7,651.0L777.8,652.2L783.0,653.2L788.3,654.0L793.6,654.6L798.9,655.0L804.3,655.2L809.6,655.2L814.9,654.9L820.1,654.5L825.3,653.9L830.3,653.1L835.1,652.0L839.8,650.8L887.5,637.5L891.4,631.9L875.6,601.6L873.9,598.8L872.0,596.0L869.8,593.4L867.3,590.7L864.5,588.2L861.4,585.8L858.1,583.5L854.6,581.3L850.9,579.2L846.9,577.2L842.8,575.4L838.5,573.8L834.0,572.3L829.4,570.9L824.8,569.7L820.0,568.7L815.1,567.8L810.2,567.1L805.2,566.6L800.2,566.3L795.2,566.1L790.3,566.1L785.3,566.3L780.5,566.7L775.7,567.2L771.0,567.9L766.4,568.8L761.9,569.9L757.6,571.1L753.5,572.5L749.5,574.0L745.7,575.7L742.2,577.5L738.8,579.5L735.8,581.6L732.9,583.8L730.4,586.1Z" fill="#242424" fill-opacity="0.79"/>
<path d="M720.8,607.8L720.9,604.9L721.1,599.7L721.5,596.8L722.2,594.0L723.2,591.3L724.6,588.6L726.3,586.0L728.3,583.4L730.6,581.0L733.1,578.7L736.0,576.5L739.0,574.4L742.4,572.4L745.9,570.6L749.7,568.9L753.7,567.4L757.8,566.0L762.1,564.8L766.6,563.7L771.2,562.8L775.9,562.1L780.7,561.6L785.6,561.2L790.5,561.0L795.5,561.0L800.5,561.2L805.5,561.5L810.5,562.0L815.4,562.7L820.3,563.6L825.1,564.6L829.8,565.8L834.4,567.1L838.8,568.7L843.1,570.3L847.3,572.1L851.2,574.1L855.0,576.1L858.5,578.3L861.8,580.6L864.9,583.1L867.7,585.6L870.2,588.2L872.4,590.9L874.4,593.6L876.0,596.4L877.3,599.3L878.3,602.2L878.9,605.1L879.2,608.0L879.2,610.9L878.8,616.1L878.4,619.0L877.7,621.9L876.7,624.7L875.3,627.5L873.5,630.2L871.5,632.8L869.1,635.3L866.4,637.7L863.4,640.0L860.1,642.2L856.5,644.3L852.7,646.2L848.6,647.9L844.3,649.5L839.8,650.8L835.1,652.0L830.3,653.1L825.3,653.9L820.1,654.5L814.9,654.9L809.6,655.2L804.3,655.2L798.9,655.0L793.6,654.6L788.3,654.0L783.0,653.2L777.8,652.2L772.7,651.0L767.8,649.7L763.0,648.1L758.3,646.4L753.9,644.6L749.7,642.5L745.7,640.4L742.0,638.1L738.5,635.7L735.3,633.2L732.4,630.6L729.8,627.9L727.6,625.1L725.6,622.3L724.0,619.4L722.7,616.5L721.7,613.6L721.1,610.7Z M857.2,616.6L858.5,614.6L859.6,612.4L860.5,610.3L861.0,608.1L861.4,605.9L861.4,603.6L861.2,601.4L860.7,599.1L860.0,596.9L859.0,594.7L857.8,592.5L856.3,590.4L854.6,588.3L852.7,586.3L850.5,584.4L848.2,582.5L845.6,580.7L842.9,579.0L840.0,577.3L837.0,575.8L833.7,574.4L830.4,573.1L826.9,571.9L823.4,570.9L819.7,570.0L816.0,569.1L812.2,568.5L808.3,567.9L804.5,567.5L800.6,567.3L796.7,567.1L792.8,567.1L788.9,567.3L785.1,567.6L781.4,568.0L777.7,568.6L774.2,569.3L770.7,570.1L767.3,571.0L764.1,572.1L761.0,573.3L758.1,574.6L755.3,576.0L752.8,577.6L750.4,579.2L748.2,580.9L746.2,582.7L744.5,584.6L743.0,586.6L741.7,588.6L740.7,590.7L739.9,592.9L739.4,595.0L739.1,597.2L739.1,599.5L739.3,601.7L739.8,604.0L740.6,606.2L741.6,608.4L742.9,610.6L744.5,612.8L746.3,614.9L748.3,616.9L750.5,618.9L753.0,620.8L755.7,622.7L758.6,624.4L761.7,626.0L764.9,627.6L768.4,629.0L771.9,630.3L775.6,631.5L779.4,632.5L783.4,633.4L787.3,634.1L791.4,634.7L795.5,635.2L799.6,635.5L803.7,635.6L807.8,635.6L811.9,635.4L815.9,635.1L819.8,634.6L823.7,634.0L827.4,633.3L831.0,632.3L834.5,631.3L837.8,630.1L841.0,628.8L843.9,627.4L846.7,625.8L849.3,624.1L851.6,622.4L853.7,620.5L855.5,618.6Z" fill-rule="evenodd" fill="#d8b452"/>
<path d="M874.0,624.9L875.7,622.2L877.1,619.4L878.1,616.6L878.8,613.8L879.2,610.9L879.2,608.0L878.9,605.1L878.3,602.2L877.3,599.3L876.0,596.4L874.4,593.6L872.4,590.9L870.2,588.2L867.7,585.6L864.9,583.1L861.8,580.6L858.5,578.3L855.0,576.1L851.2,574.1L847.3,572.1L843.1,570.3L838.8,568.7L834.4,567.1L829.8,565.8L825.1,564.6L820.3,563.6L815.4,562.7L810.5,562.0L805.5,561.5L800.5,561.2L795.5,561.0L790.5,561.0L785.6,561.2L780.7,561.6L775.9,562.1L771.2,562.8L766.6,563.7L762.1,564.8L757.8,566.0L753.7,567.4L749.7,568.9L745.9,570.6L742.4,572.4L739.0,574.4L736.0,576.5L733.1,578.7L730.6,581.0L728.3,583.4L726.3,586.0L724.6,588.6L723.2,591.3L722.2,594.0L721.5,596.8L721.1,599.7L721.0,602.6L721.3,605.5L721.9,608.4L722.9,611.3L724.2,614.2L725.8,617.0L727.8,619.9L730.0,622.6L732.6,625.3L735.5,627.9L738.7,630.4L742.2,632.8L745.9,635.1L749.9,637.2L754.2,639.3L758.6,641.1L763.2,642.8L768.0,644.4L773.0,645.7L778.1,646.9L783.3,647.9L788.5,648.7L793.9,649.3L799.2,649.7L804.6,649.8L810.0,649.8L815.3,649.6L820.5,649.2L825.6,648.6L830.6,647.7L835.5,646.7L840.2,645.5L844.7,644.1L849.0,642.6L853.1,640.8L857.0,639.0L860.5,636.9L863.8,634.8L866.8,632.5L869.5,630.0L871.9,627.5Z M857.2,616.6L858.5,614.6L859.6,612.4L860.5,610.3L861.0,608.1L861.4,605.9L861.4,603.6L861.2,601.4L860.7,599.1L860.0,596.9L859.0,594.7L857.8,592.5L856.3,590.4L854.6,588.3L852.7,586.3L850.5,584.4L848.2,582.5L845.6,580.7L842.9,579.0L840.0,577.3L837.0,575.8L833.7,574.4L830.4,573.1L826.9,571.9L823.4,570.9L819.7,570.0L816.0,569.1L812.2,568.5L808.3,567.9L804.5,567.5L800.6,567.3L796.7,567.1L792.8,567.1L788.9,567.3L785.1,567.6L781.4,568.0L777.7,568.6L774.2,569.3L770.7,570.1L767.3,571.0L764.1,572.1L761.0,573.3L758.1,574.6L755.3,576.0L752.8,577.6L750.4,579.2L748.2,580.9L746.2,582.7L744.5,584.6L743.0,586.6L741.7,588.6L740.7,590.7L739.9,592.9L739.4,595.0L739.1,597.2L739.1,599.5L739.3,601.7L739.8,604.0L740.6,606.2L741.6,608.4L742.9,610.6L744.5,612.8L746.3,614.9L748.3,616.9L750.5,618.9L753.0,620.8L755.7,622.7L758.6,624.4L761.7,626.0L764.9,627.6L768.4,629.0L771.9,630.3L775.6,631.5L779.4,632.5L783.4,633.4L787.3,634.1L791.4,634.7L795.5,635.2L799.6,635.5L803.7,635.6L807.8,635.6L811.9,635.4L815.9,635.1L819.8,634.6L823.7,634.0L827.4,633.3L831.0,632.3L834.5,631.3L837.8,630.1L841.0,628.8L843.9,627.4L846.7,625.8L849.3,624.1L851.6,622.4L853.7,620.5L855.5,618.6Z" fill-rule="evenodd" fill="url(#rg1)"/>
<path d="M732.3,602.8L732.3,600.3L732.5,596.9L732.8,594.4L733.4,592.0L734.3,589.7L735.4,587.4L736.8,585.1L738.5,582.9L740.5,580.9L742.6,578.8L745.1,576.9L747.7,575.1L750.6,573.4L753.6,571.9L756.9,570.4L760.3,569.1L763.8,567.9L767.6,566.9L771.4,566.0L775.4,565.2L779.4,564.6L783.6,564.1L787.8,563.8L792.0,563.6L796.3,563.6L800.6,563.8L804.9,564.1L809.2,564.5L813.5,565.1L817.7,565.8L821.8,566.7L825.8,567.8L829.8,568.9L833.6,570.2L837.3,571.7L840.9,573.2L844.3,574.9L847.5,576.7L850.5,578.6L853.4,580.5L856.0,582.6L858.3,584.8L860.5,587.0L862.4,589.3L864.0,591.7L865.4,594.1L866.5,596.5L867.3,599.0L867.9,601.5L868.1,604.0L868.1,606.5L867.8,609.9L867.5,612.3L866.8,614.8L865.9,617.2L864.7,619.5L863.2,621.8L861.4,624.1L859.4,626.2L857.0,628.3L854.5,630.2L851.6,632.1L848.6,633.8L845.3,635.4L841.8,636.9L838.1,638.2L834.3,639.4L830.3,640.4L826.1,641.3L821.8,642.0L817.4,642.5L813.0,642.8L808.5,643.0L803.9,643.0L799.3,642.9L794.8,642.5L790.2,642.0L785.7,641.4L781.3,640.5L777.0,639.5L772.7,638.4L768.6,637.1L764.7,635.6L760.9,634.1L757.2,632.3L753.8,630.5L750.6,628.6L747.6,626.5L744.9,624.4L742.4,622.2L740.2,619.9L738.2,617.5L736.5,615.1L735.1,612.7L734.0,610.2L733.1,607.7L732.6,605.2Z M857.2,616.6L858.5,614.6L859.6,612.4L860.5,610.3L861.0,608.1L861.4,605.9L861.4,603.6L861.2,601.4L860.7,599.1L860.0,596.9L859.0,594.7L857.8,592.5L856.3,590.4L854.6,588.3L852.7,586.3L850.5,584.4L848.2,582.5L845.6,580.7L842.9,579.0L840.0,577.3L837.0,575.8L833.7,574.4L830.4,573.1L826.9,571.9L823.4,570.9L819.7,570.0L816.0,569.1L812.2,568.5L808.3,567.9L804.5,567.5L800.6,567.3L796.7,567.1L792.8,567.1L788.9,567.3L785.1,567.6L781.4,568.0L777.7,568.6L774.2,569.3L770.7,570.1L767.3,571.0L764.1,572.1L761.0,573.3L758.1,574.6L755.3,576.0L752.8,577.6L750.4,579.2L748.2,580.9L746.2,582.7L744.5,584.6L743.0,586.6L741.7,588.6L740.7,590.7L739.9,592.9L739.4,595.0L739.1,597.2L739.1,599.5L739.3,601.7L739.8,604.0L740.6,606.2L741.6,608.4L742.9,610.6L744.5,612.8L746.3,614.9L748.3,616.9L750.5,618.9L753.0,620.8L755.7,622.7L758.6,624.4L761.7,626.0L764.9,627.6L768.4,629.0L771.9,630.3L775.6,631.5L779.4,632.5L783.4,633.4L787.3,634.1L791.4,634.7L795.5,635.2L799.6,635.5L803.7,635.6L807.8,635.6L811.9,635.4L815.9,635.1L819.8,634.6L823.7,634.0L827.4,633.3L831.0,632.3L834.5,631.3L837.8,630.1L841.0,628.8L843.9,627.4L846.7,625.8L849.3,624.1L851.6,622.4L853.7,620.5L855.5,618.6Z" fill-rule="evenodd" fill="#d9b556" fill-opacity="0.55"/>
<path d="M863.2,621.8L864.7,619.5L865.9,617.2L866.8,614.8L867.5,612.3L867.8,609.9L867.8,607.4L867.6,604.9L867.1,602.4L866.2,599.9L865.1,597.5L863.8,595.1L862.1,592.7L860.2,590.4L858.1,588.2L855.7,586.0L853.1,583.9L850.3,581.9L847.3,580.0L844.0,578.2L840.6,576.6L837.1,575.0L833.4,573.6L829.6,572.3L825.6,571.1L821.6,570.1L817.4,569.2L813.3,568.4L809.0,567.8L804.7,567.4L800.4,567.1L796.1,566.9L791.8,567.0L787.6,567.1L783.4,567.4L779.3,567.9L775.2,568.5L771.2,569.3L767.4,570.2L763.7,571.3L760.1,572.4L756.7,573.8L753.5,575.2L750.4,576.8L747.6,578.5L744.9,580.3L742.5,582.2L740.3,584.2L738.4,586.3L736.7,588.5L735.3,590.7L734.1,593.0L733.2,595.4L732.6,597.8L732.3,600.3L732.3,602.8L732.6,605.2L733.1,607.7L734.0,610.2L735.1,612.7L736.5,615.1L738.2,617.5L740.2,619.9L742.4,622.2L744.9,624.4L747.6,626.5L750.6,628.6L753.8,630.5L757.2,632.3L760.9,634.1L764.7,635.6L768.6,637.1L772.7,638.4L777.0,639.5L781.3,640.5L785.7,641.4L790.2,642.0L794.8,642.5L799.3,642.9L803.9,643.0L808.5,643.0L813.0,642.8L817.4,642.5L821.8,642.0L826.1,641.3L830.3,640.4L834.3,639.4L838.1,638.2L841.8,636.9L845.3,635.4L848.6,633.8L851.6,632.1L854.5,630.2L857.0,628.3L859.4,626.2L861.4,624.1Z" fill="none" stroke="#a88a3e" stroke-width="0.8" stroke-opacity="0.6"/>
<path d="M863.5,618.4L865.0,616.1L866.2,613.8L867.1,611.4L867.7,608.9L868.1,606.5L868.1,604.0L867.9,601.5L867.3,599.0L866.5,596.5L865.4,594.1L864.0,591.7L862.4,589.3L860.5,587.0L858.3,584.8L856.0,582.6L853.4,580.5L850.5,578.6L847.5,576.7L844.3,574.9L840.9,573.2L837.3,571.7L833.6,570.2L829.8,568.9L825.8,567.8L821.8,566.7L817.7,565.8L813.5,565.1L809.2,564.5L804.9,564.1L800.6,563.8L796.3,563.6L792.0,563.6L787.8,563.8L783.6,564.1L779.4,564.6L775.4,565.2L771.4,566.0L767.6,566.9L763.8,567.9L760.3,569.1L756.9,570.4L753.6,571.9L750.6,573.4L747.7,575.1L745.1,576.9L742.6,578.8L740.5,580.9L738.5,582.9L736.8,585.1L735.4,587.4L734.3,589.7L733.4,592.0L732.8,594.4L732.5,596.9L732.4,599.4L732.7,601.8L733.2,604.3L734.1,606.8L735.2,609.3L736.6,611.7L738.3,614.1L740.3,616.5L742.5,618.7L745.0,621.0L747.8,623.1L750.8,625.1L754.0,627.1L757.4,628.9L761.0,630.6L764.8,632.2L768.8,633.6L772.9,634.9L777.1,636.1L781.5,637.1L785.9,637.9L790.4,638.6L795.0,639.1L799.5,639.4L804.1,639.6L808.7,639.6L813.2,639.4L817.7,639.0L822.0,638.5L826.3,637.8L830.5,636.9L834.5,635.9L838.4,634.7L842.1,633.4L845.6,632.0L848.8,630.4L851.9,628.6L854.7,626.8L857.3,624.8L859.6,622.8L861.7,620.6Z M857.2,616.6L858.5,614.6L859.6,612.4L860.5,610.3L861.0,608.1L861.4,605.9L861.4,603.6L861.2,601.4L860.7,599.1L860.0,596.9L859.0,594.7L857.8,592.5L856.3,590.4L854.6,588.3L852.7,586.3L850.5,584.4L848.2,582.5L845.6,580.7L842.9,579.0L840.0,577.3L837.0,575.8L833.7,574.4L830.4,573.1L826.9,571.9L823.4,570.9L819.7,570.0L816.0,569.1L812.2,568.5L808.3,567.9L804.5,567.5L800.6,567.3L796.7,567.1L792.8,567.1L788.9,567.3L785.1,567.6L781.4,568.0L777.7,568.6L774.2,569.3L770.7,570.1L767.3,571.0L764.1,572.1L761.0,573.3L758.1,574.6L755.3,576.0L752.8,577.6L750.4,579.2L748.2,580.9L746.2,582.7L744.5,584.6L743.0,586.6L741.7,588.6L740.7,590.7L739.9,592.9L739.4,595.0L739.1,597.2L739.1,599.5L739.3,601.7L739.8,604.0L740.6,606.2L741.6,608.4L742.9,610.6L744.5,612.8L746.3,614.9L748.3,616.9L750.5,618.9L753.0,620.8L755.7,622.7L758.6,624.4L761.7,626.0L764.9,627.6L768.4,629.0L771.9,630.3L775.6,631.5L779.4,632.5L783.4,633.4L787.3,634.1L791.4,634.7L795.5,635.2L799.6,635.5L803.7,635.6L807.8,635.6L811.9,635.4L815.9,635.1L819.8,634.6L823.7,634.0L827.4,633.3L831.0,632.3L834.5,631.3L837.8,630.1L841.0,628.8L843.9,627.4L846.7,625.8L849.3,624.1L851.6,622.4L853.7,620.5L855.5,618.6Z" fill-rule="evenodd" fill="url(#rg1)"/>
<path d="M857.2,616.6L858.5,614.6L859.6,612.4L860.5,610.3L861.0,608.1L861.4,605.9L861.4,603.6L861.2,601.4L860.7,599.1L860.0,596.9L859.0,594.7L857.8,592.5L856.3,590.4L854.6,588.3L852.7,586.3L850.5,584.4L848.2,582.5L845.6,580.7L842.9,579.0L840.0,577.3L837.0,575.8L833.7,574.4L830.4,573.1L826.9,571.9L823.4,570.9L819.7,570.0L816.0,569.1L812.2,568.5L808.3,567.9L804.5,567.5L800.6,567.3L796.7,567.1L792.8,567.1L788.9,567.3L785.1,567.6L781.4,568.0L777.7,568.6L774.2,569.3L770.7,570.1L767.3,571.0L764.1,572.1L761.0,573.3L758.1,574.6L755.3,576.0L752.8,577.6L750.4,579.2L748.2,580.9L746.2,582.7L744.5,584.6L743.0,586.6L741.7,588.6L740.7,590.7L739.9,592.9L739.4,595.0L739.1,597.2L739.1,599.5L739.3,601.7L739.8,604.0L740.6,606.2L741.6,608.4L742.9,610.6L744.5,612.8L746.3,614.9L748.3,616.9L750.5,618.9L753.0,620.8L755.7,622.7L758.6,624.4L761.7,626.0L764.9,627.6L768.4,629.0L771.9,630.3L775.6,631.5L779.4,632.5L783.4,633.4L787.3,634.1L791.4,634.7L795.5,635.2L799.6,635.5L803.7,635.6L807.8,635.6L811.9,635.4L815.9,635.1L819.8,634.6L823.7,634.0L827.4,633.3L831.0,632.3L834.5,631.3L837.8,630.1L841.0,628.8L843.9,627.4L846.7,625.8L849.3,624.1L851.6,622.4L853.7,620.5L855.5,618.6Z M856.5,625.3L857.9,623.2L859.0,621.1L859.8,618.9L860.4,616.7L860.7,614.5L860.7,612.2L860.5,610.0L860.1,607.7L859.3,605.5L858.4,603.3L857.1,601.1L855.7,599.0L854.0,596.9L852.1,594.9L849.9,592.9L847.6,591.0L845.0,589.2L842.3,587.5L839.4,585.9L836.4,584.3L833.2,582.9L829.8,581.6L826.4,580.4L822.8,579.4L819.2,578.4L815.4,577.6L811.7,576.9L807.8,576.4L804.0,576.0L800.1,575.7L796.2,575.6L792.3,575.6L788.5,575.8L784.7,576.0L781.0,576.5L777.3,577.0L773.7,577.7L770.3,578.6L766.9,579.5L763.7,580.6L760.6,581.8L757.7,583.1L755.0,584.5L752.4,586.1L750.0,587.7L747.8,589.5L745.9,591.3L744.1,593.2L742.6,595.2L741.4,597.2L740.3,599.3L739.6,601.4L739.0,603.6L738.8,605.8L738.7,608.1L739.0,610.3L739.5,612.6L740.3,614.8L741.3,617.1L742.6,619.3L744.1,621.4L745.9,623.5L747.9,625.6L750.2,627.6L752.6,629.5L755.3,631.4L758.2,633.1L761.3,634.8L764.5,636.3L767.9,637.7L771.5,639.0L775.2,640.2L779.0,641.2L782.9,642.1L786.9,642.9L790.9,643.5L795.0,643.9L799.1,644.2L803.2,644.4L807.3,644.4L811.3,644.2L815.3,643.9L819.3,643.4L823.1,642.8L826.8,642.0L830.4,641.1L833.9,640.0L837.2,638.8L840.4,637.5L843.3,636.1L846.1,634.5L848.6,632.9L850.9,631.1L853.0,629.2L854.9,627.3Z" fill-rule="evenodd" fill="#f0d26a" clip-path="url(#hc1)"/>
<g clip-path="url(#hc1)"><path d="M739.1,596.1L739.3,591.5L745.2,584.5L861.7,617.6L861.4,622.2L856.0,629.6Z" fill="#fbdd6c"/><path d="M739.3,591.5L856.4,625.0L861.7,617.6L745.2,584.5Z" fill="url(#rg1)"/></g>
<path d="M869.8,632.4L870.2,627.2L874.1,621.6L891.9,626.7L891.4,631.9L887.5,637.5Z" fill="#c9a64a"/><path d="M870.2,627.2L888.0,632.2L891.9,626.7L874.1,621.6Z" fill="#f3d264"/>
<path d="M541.0,629.3L538.5,632.0L536.4,634.8L534.5,637.7L533.0,640.7L531.8,643.7L530.9,646.8L530.4,649.9L530.2,653.0L530.4,656.1L530.9,659.2L531.8,662.3L533.0,665.4L534.6,668.4L536.5,671.3L538.8,674.2L541.3,677.0L544.2,679.7L547.4,682.3L550.9,684.7L554.7,687.1L558.8,689.2L563.0,691.2L567.6,693.1L572.3,694.7L577.2,696.2L582.3,697.4L587.5,698.5L592.8,699.3L598.2,700.0L603.7,700.4L609.2,700.6L614.8,700.6L620.3,700.3L625.8,699.9L631.2,699.2L636.5,698.3L641.7,697.2L646.7,696.0L698.2,681.7L703.1,675.7L691.4,643.2L690.1,640.2L688.6,637.3L686.7,634.4L684.5,631.6L682.0,628.9L679.2,626.3L676.2,623.9L672.9,621.5L669.3,619.3L665.6,617.2L661.6,615.3L657.4,613.5L653.0,611.9L648.5,610.4L643.8,609.2L639.1,608.1L634.2,607.1L629.2,606.4L624.1,605.9L619.0,605.5L613.9,605.3L608.8,605.3L603.7,605.5L598.6,605.9L593.5,606.5L588.5,607.3L583.7,608.2L578.9,609.3L574.2,610.6L569.7,612.1L565.4,613.8L561.2,615.6L557.3,617.5L553.5,619.6L550.0,621.9L546.7,624.2L543.7,626.7Z" fill="#242424" fill-opacity="0.79"/>
<path d="M530.1,647.6L530.3,644.5L530.8,641.5L531.7,638.4L532.9,635.4L534.4,632.4L536.2,629.6L538.4,626.8L540.9,624.1L543.6,621.5L546.6,619.0L549.9,616.6L553.4,614.4L557.2,612.3L561.1,610.3L565.3,608.5L569.7,606.9L574.2,605.4L578.8,604.1L583.6,603.0L588.5,602.1L593.5,601.3L598.5,600.7L603.6,600.3L608.8,600.1L613.9,600.1L619.0,600.3L624.1,600.6L629.2,601.2L634.2,601.9L639.1,602.9L643.9,604.0L648.6,605.2L653.1,606.7L657.5,608.3L661.7,610.1L665.7,612.0L669.4,614.1L673.0,616.3L676.3,618.6L679.4,621.1L682.1,623.7L684.6,626.4L686.8,629.1L688.7,632.0L690.3,634.9L691.5,637.9L692.4,641.0L693.0,644.1L693.2,647.2L693.1,652.5L692.9,655.6L692.5,658.7L691.6,661.8L690.5,664.9L688.9,667.9L687.1,670.9L684.8,673.8L682.3,676.6L679.5,679.3L676.3,681.9L672.8,684.4L669.1,686.7L665.1,688.9L660.8,690.9L656.3,692.8L651.6,694.5L646.7,696.0L641.7,697.2L636.5,698.3L631.2,699.2L625.8,699.9L620.3,700.3L614.8,700.6L609.2,700.6L603.7,700.4L598.2,700.0L592.8,699.3L587.5,698.5L582.3,697.4L577.2,696.2L572.3,694.7L567.6,693.1L563.0,691.2L558.8,689.2L554.7,687.1L550.9,684.7L547.4,682.3L544.2,679.7L541.3,677.0L538.8,674.2L536.5,671.3L534.6,668.4L533.0,665.4L531.8,662.3L530.9,659.2L530.4,656.1L530.2,653.0Z M668.1,659.7L669.9,657.5L671.3,655.3L672.6,652.9L673.5,650.6L674.2,648.2L674.6,645.8L674.7,643.4L674.6,641.0L674.2,638.6L673.5,636.3L672.6,634.0L671.4,631.7L670.0,629.5L668.3,627.3L666.4,625.2L664.2,623.2L661.9,621.3L659.3,619.4L656.6,617.7L653.7,616.1L650.6,614.6L647.3,613.2L643.9,612.0L640.4,610.8L636.8,609.8L633.0,609.0L629.2,608.2L625.3,607.7L621.4,607.2L617.4,607.0L613.4,606.8L609.4,606.8L605.4,607.0L601.4,607.3L597.5,607.7L593.6,608.3L589.8,609.1L586.1,610.0L582.5,611.0L579.0,612.1L575.6,613.4L572.3,614.8L569.3,616.3L566.4,618.0L563.6,619.7L561.1,621.6L558.8,623.5L556.7,625.5L554.8,627.6L553.2,629.8L551.7,632.0L550.6,634.3L549.7,636.6L549.1,639.0L548.7,641.4L548.6,643.8L548.8,646.2L549.2,648.6L549.9,650.9L550.9,653.3L552.1,655.6L553.6,657.9L555.4,660.1L557.4,662.2L559.7,664.2L562.2,666.2L564.9,668.1L567.8,669.8L570.9,671.5L574.3,673.0L577.7,674.4L581.4,675.6L585.2,676.7L589.1,677.7L593.1,678.5L597.2,679.1L601.3,679.6L605.6,679.9L609.8,680.1L614.0,680.1L618.3,679.9L622.5,679.6L626.6,679.0L630.7,678.4L634.7,677.5L638.6,676.6L642.4,675.4L646.0,674.2L649.5,672.8L652.8,671.2L655.9,669.6L658.8,667.8L661.5,665.9L663.9,663.9L666.1,661.9Z" fill-rule="evenodd" fill="#d8b452"/>
<path d="M685.0,668.4L687.2,665.5L689.1,662.6L690.6,659.6L691.8,656.5L692.6,653.4L693.1,650.3L693.2,647.2L693.0,644.1L692.4,641.0L691.5,637.9L690.3,634.9L688.7,632.0L686.8,629.1L684.6,626.4L682.1,623.7L679.4,621.1L676.3,618.6L673.0,616.3L669.4,614.1L665.7,612.0L661.7,610.1L657.5,608.3L653.1,606.7L648.6,605.2L643.9,604.0L639.1,602.9L634.2,601.9L629.2,601.2L624.1,600.6L619.0,600.3L613.9,600.1L608.8,600.1L603.6,600.3L598.5,600.7L593.5,601.3L588.5,602.1L583.6,603.0L578.8,604.1L574.2,605.4L569.7,606.9L565.3,608.5L561.1,610.3L557.2,612.3L553.4,614.4L549.9,616.6L546.6,619.0L543.6,621.5L540.9,624.1L538.4,626.8L536.2,629.6L534.4,632.4L532.9,635.4L531.7,638.4L530.8,641.5L530.3,644.5L530.1,647.6L530.3,650.8L530.8,653.9L531.7,657.0L532.9,660.0L534.5,663.0L536.4,666.0L538.6,668.9L541.2,671.6L544.1,674.3L547.3,676.9L550.8,679.3L554.6,681.6L558.7,683.8L563.0,685.8L567.5,687.6L572.2,689.3L577.1,690.7L582.2,692.0L587.4,693.0L592.8,693.9L598.2,694.5L603.7,695.0L609.2,695.2L614.8,695.1L620.3,694.9L625.8,694.5L631.2,693.8L636.5,692.9L641.7,691.8L646.8,690.5L651.7,689.0L656.4,687.4L660.9,685.5L665.2,683.5L669.2,681.3L672.9,679.0L676.4,676.5L679.6,673.9L682.4,671.2Z M668.1,659.7L669.9,657.5L671.3,655.3L672.6,652.9L673.5,650.6L674.2,648.2L674.6,645.8L674.7,643.4L674.6,641.0L674.2,638.6L673.5,636.3L672.6,634.0L671.4,631.7L670.0,629.5L668.3,627.3L666.4,625.2L664.2,623.2L661.9,621.3L659.3,619.4L656.6,617.7L653.7,616.1L650.6,614.6L647.3,613.2L643.9,612.0L640.4,610.8L636.8,609.8L633.0,609.0L629.2,608.2L625.3,607.7L621.4,607.2L617.4,607.0L613.4,606.8L609.4,606.8L605.4,607.0L601.4,607.3L597.5,607.7L593.6,608.3L589.8,609.1L586.1,610.0L582.5,611.0L579.0,612.1L575.6,613.4L572.3,614.8L569.3,616.3L566.4,618.0L563.6,619.7L561.1,621.6L558.8,623.5L556.7,625.5L554.8,627.6L553.2,629.8L551.7,632.0L550.6,634.3L549.7,636.6L549.1,639.0L548.7,641.4L548.6,643.8L548.8,646.2L549.2,648.6L549.9,650.9L550.9,653.3L552.1,655.6L553.6,657.9L555.4,660.1L557.4,662.2L559.7,664.2L562.2,666.2L564.9,668.1L567.8,669.8L570.9,671.5L574.3,673.0L577.7,674.4L581.4,675.6L585.2,676.7L589.1,677.7L593.1,678.5L597.2,679.1L601.3,679.6L605.6,679.9L609.8,680.1L614.0,680.1L618.3,679.9L622.5,679.6L626.6,679.0L630.7,678.4L634.7,677.5L638.6,676.6L642.4,675.4L646.0,674.2L649.5,672.8L652.8,671.2L655.9,669.6L658.8,667.8L661.5,665.9L663.9,663.9L666.1,661.9Z" fill-rule="evenodd" fill="url(#rg2)"/>
<path d="M541.7,643.9L541.8,641.3L542.3,638.6L543.0,636.0L544.0,633.4L545.3,630.9L546.8,628.4L548.7,626.0L550.8,623.7L553.1,621.5L555.7,619.3L558.5,617.3L561.5,615.4L564.8,613.6L568.2,611.9L571.7,610.3L575.5,608.9L579.4,607.7L583.4,606.5L587.5,605.6L591.7,604.7L596.0,604.1L600.3,603.6L604.7,603.2L609.2,603.1L613.6,603.1L618.0,603.2L622.4,603.5L626.8,604.0L631.1,604.6L635.3,605.4L639.4,606.4L643.5,607.5L647.4,608.7L651.1,610.1L654.7,611.6L658.1,613.3L661.4,615.1L664.4,617.0L667.3,619.0L669.9,621.1L672.3,623.4L674.4,625.7L676.2,628.1L677.8,630.5L679.2,633.0L680.2,635.6L681.0,638.2L681.4,640.9L681.6,643.5L681.5,647.0L681.4,649.7L681.0,652.3L680.2,655.0L679.2,657.6L677.9,660.2L676.2,662.7L674.3,665.1L672.1,667.5L669.7,669.8L666.9,672.0L664.0,674.1L660.7,676.1L657.3,678.0L653.7,679.7L649.8,681.3L645.8,682.7L641.6,683.9L637.3,685.0L632.8,686.0L628.3,686.7L623.7,687.3L619.0,687.7L614.3,687.8L609.6,687.9L604.9,687.7L600.2,687.3L595.6,686.8L591.0,686.1L586.6,685.2L582.2,684.1L578.0,682.9L574.0,681.5L570.1,679.9L566.4,678.2L563.0,676.4L559.7,674.4L556.7,672.4L554.0,670.2L551.5,667.9L549.2,665.5L547.3,663.1L545.6,660.5L544.3,658.0L543.2,655.4L542.4,652.7L542.0,650.1L541.8,647.4Z M668.1,659.7L669.9,657.5L671.3,655.3L672.6,652.9L673.5,650.6L674.2,648.2L674.6,645.8L674.7,643.4L674.6,641.0L674.2,638.6L673.5,636.3L672.6,634.0L671.4,631.7L670.0,629.5L668.3,627.3L666.4,625.2L664.2,623.2L661.9,621.3L659.3,619.4L656.6,617.7L653.7,616.1L650.6,614.6L647.3,613.2L643.9,612.0L640.4,610.8L636.8,609.8L633.0,609.0L629.2,608.2L625.3,607.7L621.4,607.2L617.4,607.0L613.4,606.8L609.4,606.8L605.4,607.0L601.4,607.3L597.5,607.7L593.6,608.3L589.8,609.1L586.1,610.0L582.5,611.0L579.0,612.1L575.6,613.4L572.3,614.8L569.3,616.3L566.4,618.0L563.6,619.7L561.1,621.6L558.8,623.5L556.7,625.5L554.8,627.6L553.2,629.8L551.7,632.0L550.6,634.3L549.7,636.6L549.1,639.0L548.7,641.4L548.6,643.8L548.8,646.2L549.2,648.6L549.9,650.9L550.9,653.3L552.1,655.6L553.6,657.9L555.4,660.1L557.4,662.2L559.7,664.2L562.2,666.2L564.9,668.1L567.8,669.8L570.9,671.5L574.3,673.0L577.7,674.4L581.4,675.6L585.2,676.7L589.1,677.7L593.1,678.5L597.2,679.1L601.3,679.6L605.6,679.9L609.8,680.1L614.0,680.1L618.3,679.9L622.5,679.6L626.6,679.0L630.7,678.4L634.7,677.5L638.6,676.6L642.4,675.4L646.0,674.2L649.5,672.8L652.8,671.2L655.9,669.6L658.8,667.8L661.5,665.9L663.9,663.9L666.1,661.9Z" fill-rule="evenodd" fill="#d9b556" fill-opacity="0.55"/>
<path d="M674.3,665.1L676.2,662.7L677.9,660.2L679.2,657.6L680.2,655.0L681.0,652.3L681.4,649.7L681.5,647.0L681.4,644.3L680.9,641.7L680.1,639.1L679.1,636.5L677.8,634.0L676.2,631.5L674.3,629.1L672.2,626.8L669.8,624.6L667.2,622.4L664.4,620.4L661.3,618.5L658.1,616.7L654.7,615.1L651.1,613.5L647.3,612.1L643.4,610.9L639.4,609.8L635.3,608.8L631.1,608.0L626.8,607.4L622.4,606.9L618.0,606.6L613.6,606.5L609.2,606.5L604.8,606.6L600.4,607.0L596.0,607.5L591.7,608.1L587.5,609.0L583.4,609.9L579.4,611.1L575.5,612.3L571.8,613.7L568.2,615.3L564.8,617.0L561.6,618.8L558.6,620.7L555.8,622.8L553.2,624.9L550.8,627.1L548.7,629.5L546.9,631.9L545.4,634.3L544.1,636.9L543.1,639.5L542.3,642.1L541.9,644.7L541.8,647.4L542.0,650.1L542.4,652.7L543.2,655.4L544.3,658.0L545.6,660.5L547.3,663.1L549.2,665.5L551.5,667.9L554.0,670.2L556.7,672.4L559.7,674.4L563.0,676.4L566.4,678.2L570.1,679.9L574.0,681.5L578.0,682.9L582.2,684.1L586.6,685.2L591.0,686.1L595.6,686.8L600.2,687.3L604.9,687.7L609.6,687.9L614.3,687.8L619.0,687.7L623.7,687.3L628.3,686.7L632.8,686.0L637.3,685.0L641.6,683.9L645.8,682.7L649.8,681.3L653.7,679.7L657.3,678.0L660.7,676.1L664.0,674.1L666.9,672.0L669.7,669.8L672.1,667.5Z" fill="none" stroke="#a88a3e" stroke-width="0.8" stroke-opacity="0.6"/>
<path d="M674.4,661.6L676.3,659.2L677.9,656.7L679.3,654.1L680.3,651.5L681.0,648.8L681.5,646.2L681.6,643.5L681.4,640.9L681.0,638.2L680.2,635.6L679.2,633.0L677.8,630.5L676.2,628.1L674.4,625.7L672.3,623.4L669.9,621.1L667.3,619.0L664.4,617.0L661.4,615.1L658.1,613.3L654.7,611.6L651.1,610.1L647.4,608.7L643.5,607.5L639.4,606.4L635.3,605.4L631.1,604.6L626.8,604.0L622.4,603.5L618.0,603.2L613.6,603.1L609.2,603.1L604.7,603.2L600.3,603.6L596.0,604.1L591.7,604.7L587.5,605.6L583.4,606.5L579.4,607.7L575.5,608.9L571.7,610.3L568.2,611.9L564.8,613.6L561.5,615.4L558.5,617.3L555.7,619.3L553.1,621.5L550.8,623.7L548.7,626.0L546.8,628.4L545.3,630.9L544.0,633.4L543.0,636.0L542.3,638.6L541.8,641.3L541.7,643.9L541.9,646.6L542.3,649.2L543.1,651.9L544.2,654.5L545.6,657.1L547.2,659.6L549.2,662.0L551.4,664.4L553.9,666.7L556.7,668.9L559.7,670.9L562.9,672.9L566.4,674.7L570.1,676.4L573.9,678.0L578.0,679.3L582.2,680.6L586.5,681.6L591.0,682.5L595.5,683.3L600.2,683.8L604.9,684.2L609.6,684.3L614.3,684.3L619.0,684.1L623.7,683.7L628.3,683.2L632.9,682.4L637.3,681.5L641.6,680.4L645.8,679.1L649.8,677.7L653.7,676.2L657.4,674.4L660.8,672.6L664.0,670.6L667.0,668.5L669.7,666.3L672.2,664.0Z M668.1,659.7L669.9,657.5L671.3,655.3L672.6,652.9L673.5,650.6L674.2,648.2L674.6,645.8L674.7,643.4L674.6,641.0L674.2,638.6L673.5,636.3L672.6,634.0L671.4,631.7L670.0,629.5L668.3,627.3L666.4,625.2L664.2,623.2L661.9,621.3L659.3,619.4L656.6,617.7L653.7,616.1L650.6,614.6L647.3,613.2L643.9,612.0L640.4,610.8L636.8,609.8L633.0,609.0L629.2,608.2L625.3,607.7L621.4,607.2L617.4,607.0L613.4,606.8L609.4,606.8L605.4,607.0L601.4,607.3L597.5,607.7L593.6,608.3L589.8,609.1L586.1,610.0L582.5,611.0L579.0,612.1L575.6,613.4L572.3,614.8L569.3,616.3L566.4,618.0L563.6,619.7L561.1,621.6L558.8,623.5L556.7,625.5L554.8,627.6L553.2,629.8L551.7,632.0L550.6,634.3L549.7,636.6L549.1,639.0L548.7,641.4L548.6,643.8L548.8,646.2L549.2,648.6L549.9,650.9L550.9,653.3L552.1,655.6L553.6,657.9L555.4,660.1L557.4,662.2L559.7,664.2L562.2,666.2L564.9,668.1L567.8,669.8L570.9,671.5L574.3,673.0L577.7,674.4L581.4,675.6L585.2,676.7L589.1,677.7L593.1,678.5L597.2,679.1L601.3,679.6L605.6,679.9L609.8,680.1L614.0,680.1L618.3,679.9L622.5,679.6L626.6,679.0L630.7,678.4L634.7,677.5L638.6,676.6L642.4,675.4L646.0,674.2L649.5,672.8L652.8,671.2L655.9,669.6L658.8,667.8L661.5,665.9L663.9,663.9L666.1,661.9Z" fill-rule="evenodd" fill="url(#rg2)"/>
<path d="M668.1,659.7L669.9,657.5L671.3,655.3L672.6,652.9L673.5,650.6L674.2,648.2L674.6,645.8L674.7,643.4L674.6,641.0L674.2,638.6L673.5,636.3L672.6,634.0L671.4,631.7L670.0,629.5L668.3,627.3L666.4,625.2L664.2,623.2L661.9,621.3L659.3,619.4L656.6,617.7L653.7,616.1L650.6,614.6L647.3,613.2L643.9,612.0L640.4,610.8L636.8,609.8L633.0,609.0L629.2,608.2L625.3,607.7L621.4,607.2L617.4,607.0L613.4,606.8L609.4,606.8L605.4,607.0L601.4,607.3L597.5,607.7L593.6,608.3L589.8,609.1L586.1,610.0L582.5,611.0L579.0,612.1L575.6,613.4L572.3,614.8L569.3,616.3L566.4,618.0L563.6,619.7L561.1,621.6L558.8,623.5L556.7,625.5L554.8,627.6L553.2,629.8L551.7,632.0L550.6,634.3L549.7,636.6L549.1,639.0L548.7,641.4L548.6,643.8L548.8,646.2L549.2,648.6L549.9,650.9L550.9,653.3L552.1,655.6L553.6,657.9L555.4,660.1L557.4,662.2L559.7,664.2L562.2,666.2L564.9,668.1L567.8,669.8L570.9,671.5L574.3,673.0L577.7,674.4L581.4,675.6L585.2,676.7L589.1,677.7L593.1,678.5L597.2,679.1L601.3,679.6L605.6,679.9L609.8,680.1L614.0,680.1L618.3,679.9L622.5,679.6L626.6,679.0L630.7,678.4L634.7,677.5L638.6,676.6L642.4,675.4L646.0,674.2L649.5,672.8L652.8,671.2L655.9,669.6L658.8,667.8L661.5,665.9L663.9,663.9L666.1,661.9Z M668.0,668.6L669.7,666.4L671.2,664.1L672.4,661.8L673.3,659.4L674.0,657.0L674.4,654.6L674.5,652.2L674.4,649.8L674.0,647.4L673.3,645.0L672.4,642.7L671.2,640.4L669.8,638.2L668.1,636.0L666.2,633.9L664.1,631.9L661.8,630.0L659.2,628.1L656.5,626.4L653.6,624.8L650.5,623.3L647.2,621.9L643.9,620.6L640.3,619.5L636.7,618.5L633.0,617.6L629.2,616.9L625.3,616.3L621.4,615.9L617.4,615.6L613.4,615.5L609.4,615.5L605.4,615.6L601.5,615.9L597.5,616.4L593.7,617.0L589.9,617.7L586.1,618.6L582.5,619.6L579.0,620.8L575.7,622.1L572.4,623.5L569.4,625.0L566.5,626.7L563.8,628.4L561.2,630.3L558.9,632.2L556.8,634.2L555.0,636.3L553.3,638.5L551.9,640.8L550.8,643.1L549.9,645.4L549.2,647.8L548.9,650.2L548.8,652.6L548.9,655.0L549.4,657.4L550.1,659.8L551.1,662.1L552.3,664.4L553.8,666.7L555.6,668.9L557.6,671.1L559.8,673.1L562.3,675.1L565.0,677.0L567.9,678.7L571.1,680.4L574.4,681.9L577.8,683.3L581.5,684.5L585.2,685.7L589.1,686.6L593.1,687.4L597.2,688.1L601.4,688.6L605.6,688.9L609.8,689.0L614.0,689.0L618.3,688.8L622.5,688.5L626.6,688.0L630.7,687.3L634.7,686.5L638.5,685.5L642.3,684.4L645.9,683.1L649.4,681.7L652.6,680.1L655.7,678.5L658.6,676.7L661.3,674.8L663.8,672.8L666.0,670.7Z" fill-rule="evenodd" fill="#f0d26a" clip-path="url(#hc2)"/>
<g clip-path="url(#hc2)"><path d="M551.1,632.7L558.3,625.2L673.6,660.5L673.5,665.3L666.8,673.2L551.1,637.4Z" fill="#fbdd6c"/><path d="M551.1,632.7L666.9,668.5L673.6,660.5L558.3,625.2Z" fill="url(#rg2)"/></g>
<path d="M680.6,676.2L680.7,670.8L685.7,664.9L703.2,670.3L703.1,675.7L698.2,681.7Z" fill="#c9a64a"/><path d="M680.7,670.8L698.4,676.3L703.2,670.3L685.7,664.9Z" fill="#f3d264"/>
<path d="M327.5,672.9L324.5,675.8L321.7,678.8L319.3,681.9L317.2,685.1L315.5,688.3L314.0,691.6L312.9,694.9L312.2,698.2L311.8,701.6L311.8,704.9L312.2,708.2L312.9,711.5L314.0,714.8L315.4,717.9L317.3,721.0L319.4,724.0L322.0,726.9L324.8,729.7L328.0,732.3L331.5,734.8L335.4,737.1L339.4,739.3L343.8,741.2L348.4,743.0L353.3,744.6L358.3,745.9L363.5,747.1L368.9,748.0L374.4,748.7L380.0,749.1L385.7,749.4L391.4,749.3L397.2,749.1L403.0,748.6L408.7,747.9L414.3,746.9L419.9,745.8L425.4,744.4L481.2,729.0L487.3,722.6L480.8,687.8L480.0,684.6L478.9,681.4L477.4,678.3L475.6,675.4L473.5,672.5L471.1,669.7L468.4,667.0L465.4,664.5L462.1,662.1L458.5,659.9L454.7,657.9L450.7,656.0L446.5,654.2L442.1,652.7L437.5,651.3L432.7,650.1L427.8,649.1L422.8,648.4L417.6,647.8L412.4,647.4L407.2,647.2L401.8,647.2L396.5,647.4L391.2,647.8L385.9,648.5L380.6,649.3L375.4,650.3L370.2,651.5L365.2,652.9L360.3,654.5L355.5,656.2L350.9,658.2L346.4,660.2L342.2,662.5L338.2,664.9L334.3,667.4L330.8,670.1Z" fill="#242424" fill-opacity="0.79"/>
<path d="M311.3,699.5L311.3,696.1L311.7,692.8L312.4,689.5L313.5,686.1L314.9,682.9L316.7,679.7L318.8,676.5L321.3,673.4L324.0,670.4L327.0,667.5L330.3,664.7L333.9,662.1L337.7,659.5L341.7,657.1L346.0,654.9L350.4,652.8L355.1,650.9L359.9,649.1L364.8,647.6L369.8,646.2L375.0,645.0L380.2,644.0L385.5,643.1L390.8,642.5L396.2,642.1L401.5,641.9L406.8,641.9L412.1,642.1L417.3,642.5L422.4,643.0L427.5,643.8L432.4,644.8L437.2,646.0L441.8,647.3L446.2,648.9L450.5,650.6L454.5,652.5L458.3,654.6L461.8,656.8L465.1,659.2L468.1,661.7L470.9,664.3L473.3,667.1L475.4,670.0L477.2,673.0L478.7,676.0L479.8,679.2L480.5,682.4L481.0,685.7L481.2,691.1L481.2,694.4L480.9,697.7L480.3,701.1L479.2,704.4L477.8,707.7L476.1,711.0L474.0,714.3L471.5,717.5L468.7,720.6L465.6,723.6L462.2,726.5L458.5,729.3L454.4,731.9L450.2,734.4L445.6,736.8L440.9,739.0L435.9,741.0L430.7,742.8L425.4,744.4L419.9,745.8L414.3,746.9L408.7,747.9L403.0,748.6L397.2,749.1L391.4,749.3L385.7,749.4L380.0,749.1L374.4,748.7L368.9,748.0L363.5,747.1L358.3,745.9L353.3,744.6L348.4,743.0L343.8,741.2L339.4,739.3L335.4,737.1L331.5,734.8L328.0,732.3L324.8,729.7L322.0,726.9L319.4,724.0L317.3,721.0L315.4,717.9L314.0,714.8L312.9,711.5L312.2,708.2L311.8,704.9Z M451.7,705.9L453.9,703.6L455.8,701.1L457.5,698.6L458.9,696.1L460.0,693.6L460.8,691.0L461.4,688.4L461.6,685.9L461.6,683.3L461.4,680.8L460.8,678.3L460.0,675.8L458.9,673.5L457.5,671.2L455.9,668.9L454.0,666.8L451.9,664.7L449.6,662.7L447.1,660.9L444.3,659.2L441.4,657.5L438.3,656.1L435.0,654.7L431.5,653.5L428.0,652.4L424.2,651.5L420.4,650.7L416.5,650.1L412.5,649.7L408.4,649.4L404.3,649.2L400.2,649.2L396.0,649.4L391.8,649.7L387.7,650.2L383.5,650.9L379.5,651.6L375.5,652.6L371.5,653.7L367.7,654.9L364.0,656.3L360.4,657.8L356.9,659.4L353.6,661.2L350.5,663.0L347.6,665.0L344.8,667.1L342.3,669.2L340.0,671.5L337.9,673.8L336.0,676.2L334.4,678.7L333.1,681.2L332.0,683.7L331.2,686.2L330.7,688.8L330.4,691.4L330.4,694.0L330.7,696.5L331.3,699.0L332.2,701.5L333.4,703.9L334.8,706.3L336.5,708.6L338.5,710.8L340.7,712.9L343.2,714.9L345.9,716.8L348.9,718.5L352.1,720.2L355.4,721.7L359.0,723.0L362.7,724.2L366.6,725.2L370.6,726.1L374.7,726.8L379.0,727.3L383.3,727.6L387.6,727.8L392.1,727.8L396.5,727.6L400.9,727.2L405.3,726.7L409.6,726.0L413.9,725.1L418.1,724.0L422.2,722.8L426.2,721.4L430.1,719.9L433.7,718.3L437.3,716.5L440.6,714.6L443.7,712.6L446.6,710.4L449.3,708.2Z" fill-rule="evenodd" fill="#d8b452"/>
<path d="M468.5,715.1L471.3,712.0L473.7,708.8L475.8,705.6L477.6,702.3L479.0,699.0L480.0,695.6L480.7,692.3L481.0,689.0L481.0,685.7L480.5,682.4L479.8,679.2L478.7,676.0L477.2,673.0L475.4,670.0L473.3,667.1L470.9,664.3L468.1,661.7L465.1,659.2L461.8,656.8L458.3,654.6L454.5,652.5L450.5,650.6L446.2,648.9L441.8,647.3L437.2,646.0L432.4,644.8L427.5,643.8L422.4,643.0L417.3,642.5L412.1,642.1L406.8,641.9L401.5,641.9L396.2,642.1L390.8,642.5L385.5,643.1L380.2,644.0L375.0,645.0L369.8,646.2L364.8,647.6L359.9,649.1L355.1,650.9L350.4,652.8L346.0,654.9L341.7,657.1L337.7,659.5L333.9,662.1L330.3,664.7L327.0,667.5L324.0,670.4L321.3,673.4L318.8,676.5L316.7,679.7L314.9,682.9L313.5,686.1L312.4,689.5L311.7,692.8L311.3,696.1L311.3,699.5L311.6,702.8L312.4,706.1L313.5,709.3L314.9,712.5L316.7,715.5L318.9,718.5L321.5,721.4L324.3,724.2L327.5,726.8L331.0,729.3L334.9,731.6L339.0,733.7L343.3,735.7L347.9,737.5L352.8,739.0L357.8,740.4L363.1,741.5L368.4,742.4L374.0,743.1L379.6,743.6L385.3,743.8L391.0,743.8L396.8,743.5L402.6,743.0L408.3,742.3L414.0,741.4L419.6,740.2L425.0,738.8L430.4,737.2L435.6,735.4L440.5,733.4L445.3,731.3L449.9,728.9L454.2,726.4L458.2,723.8L461.9,721.0L465.4,718.1Z M451.7,705.9L453.9,703.6L455.8,701.1L457.5,698.6L458.9,696.1L460.0,693.6L460.8,691.0L461.4,688.4L461.6,685.9L461.6,683.3L461.4,680.8L460.8,678.3L460.0,675.8L458.9,673.5L457.5,671.2L455.9,668.9L454.0,666.8L451.9,664.7L449.6,662.7L447.1,660.9L444.3,659.2L441.4,657.5L438.3,656.1L435.0,654.7L431.5,653.5L428.0,652.4L424.2,651.5L420.4,650.7L416.5,650.1L412.5,649.7L408.4,649.4L404.3,649.2L400.2,649.2L396.0,649.4L391.8,649.7L387.7,650.2L383.5,650.9L379.5,651.6L375.5,652.6L371.5,653.7L367.7,654.9L364.0,656.3L360.4,657.8L356.9,659.4L353.6,661.2L350.5,663.0L347.6,665.0L344.8,667.1L342.3,669.2L340.0,671.5L337.9,673.8L336.0,676.2L334.4,678.7L333.1,681.2L332.0,683.7L331.2,686.2L330.7,688.8L330.4,691.4L330.4,694.0L330.7,696.5L331.3,699.0L332.2,701.5L333.4,703.9L334.8,706.3L336.5,708.6L338.5,710.8L340.7,712.9L343.2,714.9L345.9,716.8L348.9,718.5L352.1,720.2L355.4,721.7L359.0,723.0L362.7,724.2L366.6,725.2L370.6,726.1L374.7,726.8L379.0,727.3L383.3,727.6L387.6,727.8L392.1,727.8L396.5,727.6L400.9,727.2L405.3,726.7L409.6,726.0L413.9,725.1L418.1,724.0L422.2,722.8L426.2,721.4L430.1,719.9L433.7,718.3L437.3,716.5L440.6,714.6L443.7,712.6L446.6,710.4L449.3,708.2Z" fill-rule="evenodd" fill="url(#rg3)"/>
<path d="M323.2,691.8L323.5,689.0L324.1,686.1L325.0,683.3L326.2,680.5L327.7,677.7L329.5,675.0L331.6,672.4L333.9,669.8L336.5,667.3L339.3,664.9L342.4,662.6L345.6,660.4L349.1,658.4L352.8,656.4L356.6,654.6L360.6,653.0L364.7,651.5L368.9,650.1L373.3,648.9L377.7,647.9L382.2,647.0L386.8,646.3L391.4,645.8L396.0,645.4L400.6,645.2L405.2,645.2L409.7,645.4L414.2,645.7L418.6,646.2L423.0,646.9L427.2,647.7L431.3,648.7L435.3,649.9L439.1,651.3L442.7,652.7L446.2,654.4L449.5,656.2L452.5,658.1L455.3,660.1L457.9,662.3L460.2,664.6L462.3,666.9L464.1,669.4L465.6,672.0L466.8,674.6L467.8,677.3L468.4,680.1L468.7,682.9L468.9,686.4L468.9,689.2L468.6,692.1L468.0,694.9L467.1,697.8L465.9,700.6L464.4,703.4L462.5,706.2L460.4,708.9L458.0,711.6L455.3,714.1L452.4,716.6L449.2,719.0L445.7,721.2L442.0,723.3L438.1,725.3L434.1,727.2L429.8,728.9L425.4,730.4L420.8,731.7L416.2,732.9L411.4,733.9L406.6,734.7L401.7,735.3L396.8,735.7L391.8,735.9L386.9,736.0L382.1,735.8L377.3,735.4L372.6,734.8L368.0,734.0L363.5,733.1L359.2,731.9L355.1,730.6L351.2,729.1L347.4,727.4L343.9,725.6L340.6,723.6L337.6,721.5L334.9,719.3L332.4,717.0L330.2,714.5L328.3,712.0L326.8,709.3L325.5,706.6L324.5,703.9L323.9,701.1L323.6,698.2L323.2,694.7Z M451.7,705.9L453.9,703.6L455.8,701.1L457.5,698.6L458.9,696.1L460.0,693.6L460.8,691.0L461.4,688.4L461.6,685.9L461.6,683.3L461.4,680.8L460.8,678.3L460.0,675.8L458.9,673.5L457.5,671.2L455.9,668.9L454.0,666.8L451.9,664.7L449.6,662.7L447.1,660.9L444.3,659.2L441.4,657.5L438.3,656.1L435.0,654.7L431.5,653.5L428.0,652.4L424.2,651.5L420.4,650.7L416.5,650.1L412.5,649.7L408.4,649.4L404.3,649.2L400.2,649.2L396.0,649.4L391.8,649.7L387.7,650.2L383.5,650.9L379.5,651.6L375.5,652.6L371.5,653.7L367.7,654.9L364.0,656.3L360.4,657.8L356.9,659.4L353.6,661.2L350.5,663.0L347.6,665.0L344.8,667.1L342.3,669.2L340.0,671.5L337.9,673.8L336.0,676.2L334.4,678.7L333.1,681.2L332.0,683.7L331.2,686.2L330.7,688.8L330.4,691.4L330.4,694.0L330.7,696.5L331.3,699.0L332.2,701.5L333.4,703.9L334.8,706.3L336.5,708.6L338.5,710.8L340.7,712.9L343.2,714.9L345.9,716.8L348.9,718.5L352.1,720.2L355.4,721.7L359.0,723.0L362.7,724.2L366.6,725.2L370.6,726.1L374.7,726.8L379.0,727.3L383.3,727.6L387.6,727.8L392.1,727.8L396.5,727.6L400.9,727.2L405.3,726.7L409.6,726.0L413.9,725.1L418.1,724.0L422.2,722.8L426.2,721.4L430.1,719.9L433.7,718.3L437.3,716.5L440.6,714.6L443.7,712.6L446.6,710.4L449.3,708.2Z" fill-rule="evenodd" fill="#d9b556" fill-opacity="0.55"/>
<path d="M458.0,711.6L460.4,708.9L462.5,706.2L464.4,703.4L465.9,700.6L467.1,697.8L468.0,694.9L468.6,692.1L468.9,689.2L468.9,686.4L468.6,683.6L467.9,680.8L467.0,678.1L465.8,675.5L464.3,672.9L462.5,670.4L460.4,668.1L458.1,665.8L455.5,663.6L452.7,661.6L449.6,659.6L446.4,657.9L442.9,656.2L439.3,654.7L435.5,653.4L431.5,652.2L427.4,651.2L423.2,650.4L418.8,649.7L414.4,649.2L409.9,648.8L405.4,648.7L400.8,648.7L396.2,648.9L391.6,649.2L387.0,649.8L382.5,650.5L378.0,651.3L373.5,652.4L369.2,653.6L365.0,655.0L360.8,656.5L356.9,658.1L353.0,659.9L349.4,661.9L345.9,663.9L342.7,666.1L339.6,668.4L336.8,670.8L334.2,673.3L331.9,675.9L329.8,678.5L328.1,681.2L326.6,684.0L325.3,686.8L324.4,689.7L323.8,692.5L323.5,695.4L323.6,698.2L323.9,701.1L324.5,703.9L325.5,706.6L326.8,709.3L328.3,712.0L330.2,714.5L332.4,717.0L334.9,719.3L337.6,721.5L340.6,723.6L343.9,725.6L347.4,727.4L351.2,729.1L355.1,730.6L359.2,731.9L363.5,733.1L368.0,734.0L372.6,734.8L377.3,735.4L382.1,735.8L386.9,736.0L391.8,735.9L396.8,735.7L401.7,735.3L406.6,734.7L411.4,733.9L416.2,732.9L420.8,731.7L425.4,730.4L429.8,728.9L434.1,727.2L438.1,725.3L442.0,723.3L445.7,721.2L449.2,719.0L452.4,716.6L455.3,714.1Z" fill="none" stroke="#a88a3e" stroke-width="0.8" stroke-opacity="0.6"/>
<path d="M457.8,708.0L460.2,705.4L462.4,702.6L464.2,699.9L465.7,697.1L467.0,694.2L467.9,691.4L468.5,688.5L468.8,685.7L468.7,682.9L468.4,680.1L467.8,677.3L466.8,674.6L465.6,672.0L464.1,669.4L462.3,666.9L460.2,664.6L457.9,662.3L455.3,660.1L452.5,658.1L449.5,656.2L446.2,654.4L442.7,652.7L439.1,651.3L435.3,649.9L431.3,648.7L427.2,647.7L423.0,646.9L418.6,646.2L414.2,645.7L409.7,645.4L405.2,645.2L400.6,645.2L396.0,645.4L391.4,645.8L386.8,646.3L382.2,647.0L377.7,647.9L373.3,648.9L368.9,650.1L364.7,651.5L360.6,653.0L356.6,654.6L352.8,656.4L349.1,658.4L345.6,660.4L342.4,662.6L339.3,664.9L336.5,667.3L333.9,669.8L331.6,672.4L329.5,675.0L327.7,677.7L326.2,680.5L325.0,683.3L324.1,686.1L323.5,689.0L323.2,691.8L323.2,694.7L323.6,697.5L324.2,700.3L325.2,703.1L326.4,705.8L328.0,708.4L329.9,710.9L332.1,713.4L334.6,715.7L337.3,718.0L340.3,720.1L343.6,722.0L347.1,723.8L350.9,725.5L354.8,727.0L358.9,728.3L363.3,729.5L367.7,730.4L372.3,731.2L377.0,731.8L381.8,732.2L386.7,732.4L391.6,732.3L396.5,732.1L401.4,731.7L406.3,731.1L411.2,730.3L415.9,729.3L420.6,728.1L425.2,726.8L429.6,725.3L433.9,723.6L437.9,721.7L441.8,719.7L445.5,717.6L449.0,715.4L452.2,713.0L455.1,710.5Z M451.7,705.9L453.9,703.6L455.8,701.1L457.5,698.6L458.9,696.1L460.0,693.6L460.8,691.0L461.4,688.4L461.6,685.9L461.6,683.3L461.4,680.8L460.8,678.3L460.0,675.8L458.9,673.5L457.5,671.2L455.9,668.9L454.0,666.8L451.9,664.7L449.6,662.7L447.1,660.9L444.3,659.2L441.4,657.5L438.3,656.1L435.0,654.7L431.5,653.5L428.0,652.4L424.2,651.5L420.4,650.7L416.5,650.1L412.5,649.7L408.4,649.4L404.3,649.2L400.2,649.2L396.0,649.4L391.8,649.7L387.7,650.2L383.5,650.9L379.5,651.6L375.5,652.6L371.5,653.7L367.7,654.9L364.0,656.3L360.4,657.8L356.9,659.4L353.6,661.2L350.5,663.0L347.6,665.0L344.8,667.1L342.3,669.2L340.0,671.5L337.9,673.8L336.0,676.2L334.4,678.7L333.1,681.2L332.0,683.7L331.2,686.2L330.7,688.8L330.4,691.4L330.4,694.0L330.7,696.5L331.3,699.0L332.2,701.5L333.4,703.9L334.8,706.3L336.5,708.6L338.5,710.8L340.7,712.9L343.2,714.9L345.9,716.8L348.9,718.5L352.1,720.2L355.4,721.7L359.0,723.0L362.7,724.2L366.6,725.2L370.6,726.1L374.7,726.8L379.0,727.3L383.3,727.6L387.6,727.8L392.1,727.8L396.5,727.6L400.9,727.2L405.3,726.7L409.6,726.0L413.9,725.1L418.1,724.0L422.2,722.8L426.2,721.4L430.1,719.9L433.7,718.3L437.3,716.5L440.6,714.6L443.7,712.6L446.6,710.4L449.3,708.2Z" fill-rule="evenodd" fill="url(#rg3)"/>
<path d="M451.7,705.9L453.9,703.6L455.8,701.1L457.5,698.6L458.9,696.1L460.0,693.6L460.8,691.0L461.4,688.4L461.6,685.9L461.6,683.3L461.4,680.8L460.8,678.3L460.0,675.8L458.9,673.5L457.5,671.2L455.9,668.9L454.0,666.8L451.9,664.7L449.6,662.7L447.1,660.9L444.3,659.2L441.4,657.5L438.3,656.1L435.0,654.7L431.5,653.5L428.0,652.4L424.2,651.5L420.4,650.7L416.5,650.1L412.5,649.7L408.4,649.4L404.3,649.2L400.2,649.2L396.0,649.4L391.8,649.7L387.7,650.2L383.5,650.9L379.5,651.6L375.5,652.6L371.5,653.7L367.7,654.9L364.0,656.3L360.4,657.8L356.9,659.4L353.6,661.2L350.5,663.0L347.6,665.0L344.8,667.1L342.3,669.2L340.0,671.5L337.9,673.8L336.0,676.2L334.4,678.7L333.1,681.2L332.0,683.7L331.2,686.2L330.7,688.8L330.4,691.4L330.4,694.0L330.7,696.5L331.3,699.0L332.2,701.5L333.4,703.9L334.8,706.3L336.5,708.6L338.5,710.8L340.7,712.9L343.2,714.9L345.9,716.8L348.9,718.5L352.1,720.2L355.4,721.7L359.0,723.0L362.7,724.2L366.6,725.2L370.6,726.1L374.7,726.8L379.0,727.3L383.3,727.6L387.6,727.8L392.1,727.8L396.5,727.6L400.9,727.2L405.3,726.7L409.6,726.0L413.9,725.1L418.1,724.0L422.2,722.8L426.2,721.4L430.1,719.9L433.7,718.3L437.3,716.5L440.6,714.6L443.7,712.6L446.6,710.4L449.3,708.2Z M452.2,715.0L454.3,712.6L456.3,710.1L457.9,707.7L459.3,705.1L460.4,702.6L461.2,700.0L461.8,697.4L462.1,694.8L462.1,692.3L461.8,689.7L461.2,687.2L460.4,684.8L459.3,682.4L457.9,680.1L456.3,677.8L454.5,675.6L452.4,673.6L450.1,671.6L447.5,669.8L444.8,668.0L441.9,666.4L438.8,664.9L435.5,663.6L432.0,662.3L428.5,661.3L424.8,660.3L420.9,659.6L417.0,659.0L413.0,658.5L409.0,658.2L404.9,658.0L400.7,658.0L396.6,658.2L392.4,658.5L388.3,659.0L384.2,659.7L380.1,660.5L376.1,661.4L372.2,662.5L368.4,663.7L364.7,665.1L361.1,666.6L357.7,668.3L354.4,670.0L351.3,671.9L348.3,673.9L345.6,676.0L343.0,678.1L340.7,680.4L338.6,682.7L336.8,685.1L335.2,687.6L333.9,690.1L332.8,692.6L332.0,695.2L331.5,697.8L331.2,700.4L331.2,702.9L331.6,705.5L332.2,708.0L333.0,710.5L334.2,713.0L335.6,715.3L337.3,717.6L339.3,719.8L341.5,722.0L344.0,724.0L346.7,725.9L349.7,727.6L352.8,729.3L356.2,730.8L359.7,732.1L363.4,733.3L367.3,734.3L371.3,735.2L375.4,735.9L379.7,736.4L384.0,736.8L388.3,736.9L392.7,736.9L397.1,736.7L401.5,736.3L405.9,735.8L410.2,735.1L414.5,734.2L418.7,733.1L422.8,731.9L426.8,730.5L430.6,729.0L434.3,727.4L437.8,725.6L441.1,723.7L444.2,721.6L447.1,719.5L449.7,717.3Z" fill-rule="evenodd" fill="#f0d26a" clip-path="url(#hc3)"/>
<g clip-path="url(#hc3)"><path d="M336.2,676.7L345.0,668.7L458.2,706.6L458.5,711.5L450.1,720.0L336.6,681.5Z" fill="#fbdd6c"/><path d="M336.2,676.7L449.9,715.1L458.2,706.6L345.0,668.7Z" fill="url(#rg3)"/></g>
<path d="M463.7,717.7L469.8,711.3L487.1,717.1L487.3,722.6L481.2,729.0L463.9,723.2Z" fill="#c9a64a"/><path d="M463.7,717.7L481.0,723.5L487.1,717.1L469.8,711.3Z" fill="#f3d264"/>
<path d="M589.3,761.0L586.7,764.3L584.5,767.7L582.5,771.3L581.0,774.9L579.8,778.6L578.9,782.3L578.5,786.1L578.4,789.9L578.7,793.8L579.5,797.6L580.6,801.4L582.0,805.2L583.9,808.9L586.2,812.5L588.8,816.0L591.8,819.5L595.1,822.8L598.8,826.0L602.7,829.0L607.0,831.8L611.6,834.5L616.5,837.0L621.6,839.2L626.9,841.3L632.4,843.1L638.1,844.6L644.0,845.9L649.9,847.0L656.0,847.8L662.1,848.3L668.3,848.6L674.4,848.5L680.5,848.2L686.6,847.7L692.6,846.8L698.4,845.8L704.1,844.4L709.7,842.8L766.1,825.2L771.1,817.9L756.3,778.0L754.8,774.3L752.9,770.7L750.6,767.2L748.0,763.8L745.1,760.5L741.9,757.4L738.4,754.3L734.7,751.5L730.6,748.8L726.3,746.2L721.8,743.9L717.1,741.7L712.2,739.7L707.2,738.0L701.9,736.4L696.6,735.1L691.2,734.0L685.6,733.1L680.0,732.4L674.4,731.9L668.7,731.7L663.1,731.8L657.4,732.0L651.8,732.5L646.3,733.2L640.9,734.1L635.5,735.3L630.3,736.6L625.2,738.2L620.3,740.0L615.6,742.0L611.1,744.2L606.8,746.6L602.8,749.2L599.0,751.9L595.5,754.8L592.2,757.8Z" fill="#242424" fill-opacity="0.79"/>
<path d="M578.4,784.3L578.4,780.5L578.9,776.7L579.7,773.0L580.9,769.3L582.5,765.7L584.4,762.1L586.7,758.7L589.3,755.4L592.2,752.2L595.4,749.2L598.9,746.3L602.7,743.6L606.8,741.0L611.1,738.7L615.6,736.5L620.3,734.5L625.2,732.7L630.3,731.1L635.6,729.7L640.9,728.6L646.4,727.7L651.9,727.0L657.5,726.5L663.2,726.2L668.8,726.2L674.5,726.4L680.1,726.9L685.8,727.5L691.3,728.4L696.8,729.6L702.1,730.9L707.3,732.4L712.4,734.2L717.3,736.2L722.0,738.3L726.5,740.7L730.8,743.2L734.9,745.9L738.7,748.8L742.2,751.8L745.4,754.9L748.3,758.2L750.9,761.6L753.1,765.1L755.0,768.7L756.6,772.4L757.8,776.1L758.6,779.9L759.0,783.7L759.0,787.5L758.7,793.2L758.4,797.0L757.6,800.8L756.5,804.6L755.0,808.3L753.1,811.9L750.8,815.5L748.1,819.0L745.1,822.3L741.8,825.5L738.0,828.5L734.0,831.4L729.7,834.1L725.1,836.6L720.2,838.9L715.0,841.0L709.7,842.8L704.1,844.4L698.4,845.8L692.6,846.8L686.6,847.7L680.5,848.2L674.4,848.5L668.3,848.6L662.1,848.3L656.0,847.8L649.9,847.0L644.0,845.9L638.1,844.6L632.4,843.1L626.9,841.3L621.6,839.2L616.5,837.0L611.6,834.5L607.0,831.8L602.7,829.0L598.8,826.0L595.1,822.8L591.8,819.5L588.8,816.0L586.2,812.5L583.9,808.9L582.0,805.2L580.6,801.4L579.5,797.6L578.7,793.8L578.4,789.9Z M732.2,799.7L734.0,797.0L735.5,794.2L736.7,791.4L737.6,788.5L738.2,785.5L738.6,782.6L738.6,779.7L738.3,776.7L737.7,773.8L736.8,770.9L735.7,768.1L734.2,765.3L732.5,762.6L730.6,759.9L728.3,757.4L725.9,754.9L723.2,752.6L720.2,750.3L717.1,748.2L713.8,746.2L710.3,744.4L706.6,742.7L702.8,741.2L698.9,739.8L694.8,738.6L690.6,737.5L686.4,736.7L682.1,736.0L677.7,735.4L673.3,735.1L668.8,734.9L664.4,734.9L660.0,735.1L655.6,735.5L651.3,736.1L647.1,736.8L642.9,737.7L638.8,738.8L634.9,740.0L631.0,741.4L627.4,743.0L623.9,744.7L620.5,746.5L617.4,748.5L614.5,750.7L611.8,752.9L609.3,755.3L607.0,757.8L605.1,760.3L603.3,763.0L601.9,765.7L600.7,768.5L599.8,771.4L599.2,774.3L598.9,777.2L598.9,780.1L599.2,783.1L599.8,786.0L600.7,788.9L601.9,791.8L603.3,794.6L605.1,797.4L607.2,800.1L609.5,802.7L612.1,805.3L615.0,807.7L618.1,810.0L621.4,812.1L624.9,814.2L628.7,816.0L632.6,817.7L636.7,819.3L641.0,820.7L645.4,821.8L649.8,822.8L654.4,823.6L659.1,824.2L663.8,824.6L668.5,824.8L673.2,824.8L677.9,824.6L682.6,824.1L687.2,823.5L691.7,822.7L696.1,821.7L700.3,820.5L704.4,819.1L708.4,817.5L712.2,815.8L715.7,813.9L719.1,811.8L722.2,809.6L725.1,807.3L727.7,804.9L730.1,802.3Z" fill-rule="evenodd" fill="#d8b452"/>
<path d="M751.1,809.8L753.3,806.3L755.3,802.6L756.8,798.9L757.9,795.1L758.7,791.3L759.0,787.5L759.0,783.7L758.6,779.9L757.8,776.1L756.6,772.4L755.0,768.7L753.1,765.1L750.9,761.6L748.3,758.2L745.4,754.9L742.2,751.8L738.7,748.8L734.9,745.9L730.8,743.2L726.5,740.7L722.0,738.3L717.3,736.2L712.4,734.2L707.3,732.4L702.1,730.9L696.8,729.6L691.3,728.4L685.8,727.5L680.1,726.9L674.5,726.4L668.8,726.2L663.2,726.2L657.5,726.5L651.9,727.0L646.4,727.7L640.9,728.6L635.6,729.7L630.3,731.1L625.2,732.7L620.3,734.5L615.6,736.5L611.1,738.7L606.8,741.0L602.7,743.6L598.9,746.3L595.4,749.2L592.2,752.2L589.3,755.4L586.7,758.7L584.4,762.1L582.5,765.7L580.9,769.3L579.7,773.0L578.9,776.7L578.4,780.5L578.4,784.3L578.7,788.1L579.4,791.9L580.5,795.7L582.0,799.5L583.9,803.2L586.1,806.8L588.7,810.3L591.7,813.8L595.1,817.1L598.7,820.3L602.7,823.3L607.0,826.1L611.6,828.8L616.5,831.2L621.6,833.5L626.9,835.5L632.5,837.3L638.2,838.9L644.0,840.2L650.0,841.2L656.1,842.0L662.2,842.5L668.4,842.8L674.5,842.8L680.7,842.5L686.7,841.9L692.7,841.1L698.6,840.0L704.3,838.7L709.9,837.1L715.2,835.2L720.4,833.2L725.3,830.9L729.9,828.4L734.2,825.7L738.3,822.8L742.0,819.8L745.4,816.6L748.4,813.3Z M732.2,799.7L734.0,797.0L735.5,794.2L736.7,791.4L737.6,788.5L738.2,785.5L738.6,782.6L738.6,779.7L738.3,776.7L737.7,773.8L736.8,770.9L735.7,768.1L734.2,765.3L732.5,762.6L730.6,759.9L728.3,757.4L725.9,754.9L723.2,752.6L720.2,750.3L717.1,748.2L713.8,746.2L710.3,744.4L706.6,742.7L702.8,741.2L698.9,739.8L694.8,738.6L690.6,737.5L686.4,736.7L682.1,736.0L677.7,735.4L673.3,735.1L668.8,734.9L664.4,734.9L660.0,735.1L655.6,735.5L651.3,736.1L647.1,736.8L642.9,737.7L638.8,738.8L634.9,740.0L631.0,741.4L627.4,743.0L623.9,744.7L620.5,746.5L617.4,748.5L614.5,750.7L611.8,752.9L609.3,755.3L607.0,757.8L605.1,760.3L603.3,763.0L601.9,765.7L600.7,768.5L599.8,771.4L599.2,774.3L598.9,777.2L598.9,780.1L599.2,783.1L599.8,786.0L600.7,788.9L601.9,791.8L603.3,794.6L605.1,797.4L607.2,800.1L609.5,802.7L612.1,805.3L615.0,807.7L618.1,810.0L621.4,812.1L624.9,814.2L628.7,816.0L632.6,817.7L636.7,819.3L641.0,820.7L645.4,821.8L649.8,822.8L654.4,823.6L659.1,824.2L663.8,824.6L668.5,824.8L673.2,824.8L677.9,824.6L682.6,824.1L687.2,823.5L691.7,822.7L696.1,821.7L700.3,820.5L704.4,819.1L708.4,817.5L712.2,815.8L715.7,813.9L719.1,811.8L722.2,809.6L725.1,807.3L727.7,804.9L730.1,802.3Z" fill-rule="evenodd" fill="url(#rg4)"/>
<path d="M591.3,780.3L591.3,777.0L591.7,773.8L592.3,770.6L593.3,767.4L594.7,764.3L596.3,761.3L598.2,758.4L600.4,755.5L602.9,752.8L605.7,750.2L608.7,747.7L611.9,745.4L615.4,743.2L619.1,741.1L623.0,739.2L627.1,737.5L631.3,735.9L635.7,734.6L640.2,733.4L644.8,732.4L649.5,731.6L654.3,731.0L659.1,730.6L664.0,730.4L668.9,730.3L673.8,730.5L678.6,730.9L683.5,731.5L688.2,732.3L692.9,733.2L697.6,734.4L702.1,735.7L706.4,737.2L710.6,738.9L714.7,740.8L718.6,742.8L722.3,745.0L725.7,747.3L729.0,749.8L732.0,752.4L734.7,755.1L737.2,757.9L739.4,760.9L741.3,763.9L742.9,767.0L744.2,770.1L745.2,773.3L745.9,776.5L746.2,779.8L746.2,783.1L746.0,786.7L745.7,790.0L745.0,793.3L744.0,796.5L742.7,799.6L741.0,802.7L739.1,805.8L736.8,808.7L734.2,811.5L731.2,814.3L728.1,816.8L724.6,819.3L720.9,821.6L716.9,823.7L712.7,825.6L708.3,827.4L703.8,828.9L699.0,830.3L694.1,831.4L689.1,832.3L684.0,833.0L678.9,833.5L673.6,833.8L668.4,833.8L663.2,833.6L657.9,833.1L652.8,832.5L647.7,831.6L642.7,830.5L637.8,829.1L633.1,827.6L628.5,825.9L624.2,824.0L620.0,821.9L616.1,819.6L612.4,817.2L609.0,814.7L605.8,812.0L602.9,809.2L600.4,806.2L598.1,803.2L596.1,800.1L594.5,797.0L593.2,793.8L592.2,790.5L591.6,787.2L591.3,784.0Z M732.2,799.7L734.0,797.0L735.5,794.2L736.7,791.4L737.6,788.5L738.2,785.5L738.6,782.6L738.6,779.7L738.3,776.7L737.7,773.8L736.8,770.9L735.7,768.1L734.2,765.3L732.5,762.6L730.6,759.9L728.3,757.4L725.9,754.9L723.2,752.6L720.2,750.3L717.1,748.2L713.8,746.2L710.3,744.4L706.6,742.7L702.8,741.2L698.9,739.8L694.8,738.6L690.6,737.5L686.4,736.7L682.1,736.0L677.7,735.4L673.3,735.1L668.8,734.9L664.4,734.9L660.0,735.1L655.6,735.5L651.3,736.1L647.1,736.8L642.9,737.7L638.8,738.8L634.9,740.0L631.0,741.4L627.4,743.0L623.9,744.7L620.5,746.5L617.4,748.5L614.5,750.7L611.8,752.9L609.3,755.3L607.0,757.8L605.1,760.3L603.3,763.0L601.9,765.7L600.7,768.5L599.8,771.4L599.2,774.3L598.9,777.2L598.9,780.1L599.2,783.1L599.8,786.0L600.7,788.9L601.9,791.8L603.3,794.6L605.1,797.4L607.2,800.1L609.5,802.7L612.1,805.3L615.0,807.7L618.1,810.0L621.4,812.1L624.9,814.2L628.7,816.0L632.6,817.7L636.7,819.3L641.0,820.7L645.4,821.8L649.8,822.8L654.4,823.6L659.1,824.2L663.8,824.6L668.5,824.8L673.2,824.8L677.9,824.6L682.6,824.1L687.2,823.5L691.7,822.7L696.1,821.7L700.3,820.5L704.4,819.1L708.4,817.5L712.2,815.8L715.7,813.9L719.1,811.8L722.2,809.6L725.1,807.3L727.7,804.9L730.1,802.3Z" fill-rule="evenodd" fill="#d9b556" fill-opacity="0.55"/>
<path d="M739.1,805.8L741.0,802.7L742.7,799.6L744.0,796.5L745.0,793.3L745.7,790.0L746.0,786.7L746.0,783.5L745.7,780.2L745.0,777.0L744.1,773.8L742.8,770.6L741.2,767.5L739.2,764.5L737.1,761.6L734.6,758.8L731.8,756.0L728.8,753.4L725.6,751.0L722.1,748.6L718.5,746.5L714.6,744.4L710.5,742.6L706.3,740.9L701.9,739.3L697.5,738.0L692.9,736.8L688.2,735.9L683.4,735.1L678.6,734.5L673.7,734.1L668.8,733.9L663.9,734.0L659.0,734.2L654.2,734.6L649.4,735.2L644.7,736.0L640.1,737.0L635.6,738.2L631.3,739.6L627.0,741.1L623.0,742.8L619.1,744.7L615.4,746.8L611.9,749.0L608.7,751.3L605.7,753.8L602.9,756.4L600.4,759.2L598.2,762.0L596.3,765.0L594.7,768.0L593.4,771.1L592.4,774.3L591.7,777.5L591.3,780.7L591.3,784.0L591.6,787.2L592.2,790.5L593.2,793.8L594.5,797.0L596.1,800.1L598.1,803.2L600.4,806.2L602.9,809.2L605.8,812.0L609.0,814.7L612.4,817.2L616.1,819.6L620.0,821.9L624.2,824.0L628.5,825.9L633.1,827.6L637.8,829.1L642.7,830.5L647.7,831.6L652.8,832.5L657.9,833.1L663.2,833.6L668.4,833.8L673.6,833.8L678.9,833.5L684.0,833.0L689.1,832.3L694.1,831.4L699.0,830.3L703.8,828.9L708.3,827.4L712.7,825.6L716.9,823.7L720.9,821.6L724.6,819.3L728.1,816.8L731.2,814.3L734.2,811.5L736.8,808.7Z" fill="none" stroke="#a88a3e" stroke-width="0.8" stroke-opacity="0.6"/>
<path d="M739.2,802.1L741.2,799.0L742.9,795.9L744.2,792.8L745.2,789.6L745.9,786.3L746.2,783.1L746.2,779.8L745.9,776.5L745.2,773.3L744.2,770.1L742.9,767.0L741.3,763.9L739.4,760.9L737.2,757.9L734.7,755.1L732.0,752.4L729.0,749.8L725.7,747.3L722.3,745.0L718.6,742.8L714.7,740.8L710.6,738.9L706.4,737.2L702.1,735.7L697.6,734.4L692.9,733.2L688.2,732.3L683.5,731.5L678.6,730.9L673.8,730.5L668.9,730.3L664.0,730.4L659.1,730.6L654.3,731.0L649.5,731.6L644.8,732.4L640.2,733.4L635.7,734.6L631.3,735.9L627.1,737.5L623.0,739.2L619.1,741.1L615.4,743.2L611.9,745.4L608.7,747.7L605.7,750.2L602.9,752.8L600.4,755.5L598.2,758.4L596.3,761.3L594.7,764.3L593.3,767.4L592.3,770.6L591.7,773.8L591.3,777.0L591.3,780.3L591.6,783.6L592.2,786.8L593.2,790.1L594.5,793.3L596.1,796.4L598.1,799.5L600.3,802.5L602.9,805.4L605.8,808.3L609.0,810.9L612.4,813.5L616.1,815.9L620.0,818.2L624.2,820.3L628.6,822.2L633.1,823.9L637.9,825.4L642.7,826.7L647.7,827.8L652.8,828.7L658.0,829.4L663.2,829.8L668.5,830.0L673.7,830.0L678.9,829.8L684.1,829.3L689.2,828.6L694.2,827.7L699.1,826.5L703.9,825.2L708.5,823.6L712.9,821.9L717.1,819.9L721.0,817.8L724.7,815.6L728.2,813.1L731.4,810.5L734.3,807.8L736.9,805.0Z M732.2,799.7L734.0,797.0L735.5,794.2L736.7,791.4L737.6,788.5L738.2,785.5L738.6,782.6L738.6,779.7L738.3,776.7L737.7,773.8L736.8,770.9L735.7,768.1L734.2,765.3L732.5,762.6L730.6,759.9L728.3,757.4L725.9,754.9L723.2,752.6L720.2,750.3L717.1,748.2L713.8,746.2L710.3,744.4L706.6,742.7L702.8,741.2L698.9,739.8L694.8,738.6L690.6,737.5L686.4,736.7L682.1,736.0L677.7,735.4L673.3,735.1L668.8,734.9L664.4,734.9L660.0,735.1L655.6,735.5L651.3,736.1L647.1,736.8L642.9,737.7L638.8,738.8L634.9,740.0L631.0,741.4L627.4,743.0L623.9,744.7L620.5,746.5L617.4,748.5L614.5,750.7L611.8,752.9L609.3,755.3L607.0,757.8L605.1,760.3L603.3,763.0L601.9,765.7L600.7,768.5L599.8,771.4L599.2,774.3L598.9,777.2L598.9,780.1L599.2,783.1L599.8,786.0L600.7,788.9L601.9,791.8L603.3,794.6L605.1,797.4L607.2,800.1L609.5,802.7L612.1,805.3L615.0,807.7L618.1,810.0L621.4,812.1L624.9,814.2L628.7,816.0L632.6,817.7L636.7,819.3L641.0,820.7L645.4,821.8L649.8,822.8L654.4,823.6L659.1,824.2L663.8,824.6L668.5,824.8L673.2,824.8L677.9,824.6L682.6,824.1L687.2,823.5L691.7,822.7L696.1,821.7L700.3,820.5L704.4,819.1L708.4,817.5L712.2,815.8L715.7,813.9L719.1,811.8L722.2,809.6L725.1,807.3L727.7,804.9L730.1,802.3Z" fill-rule="evenodd" fill="url(#rg4)"/>
<path d="M732.2,799.7L734.0,797.0L735.5,794.2L736.7,791.4L737.6,788.5L738.2,785.5L738.6,782.6L738.6,779.7L738.3,776.7L737.7,773.8L736.8,770.9L735.7,768.1L734.2,765.3L732.5,762.6L730.6,759.9L728.3,757.4L725.9,754.9L723.2,752.6L720.2,750.3L717.1,748.2L713.8,746.2L710.3,744.4L706.6,742.7L702.8,741.2L698.9,739.8L694.8,738.6L690.6,737.5L686.4,736.7L682.1,736.0L677.7,735.4L673.3,735.1L668.8,734.9L664.4,734.9L660.0,735.1L655.6,735.5L651.3,736.1L647.1,736.8L642.9,737.7L638.8,738.8L634.9,740.0L631.0,741.4L627.4,743.0L623.9,744.7L620.5,746.5L617.4,748.5L614.5,750.7L611.8,752.9L609.3,755.3L607.0,757.8L605.1,760.3L603.3,763.0L601.9,765.7L600.7,768.5L599.8,771.4L599.2,774.3L598.9,777.2L598.9,780.1L599.2,783.1L599.8,786.0L600.7,788.9L601.9,791.8L603.3,794.6L605.1,797.4L607.2,800.1L609.5,802.7L612.1,805.3L615.0,807.7L618.1,810.0L621.4,812.1L624.9,814.2L628.7,816.0L632.6,817.7L636.7,819.3L641.0,820.7L645.4,821.8L649.8,822.8L654.4,823.6L659.1,824.2L663.8,824.6L668.5,824.8L673.2,824.8L677.9,824.6L682.6,824.1L687.2,823.5L691.7,822.7L696.1,821.7L700.3,820.5L704.4,819.1L708.4,817.5L712.2,815.8L715.7,813.9L719.1,811.8L722.2,809.6L725.1,807.3L727.7,804.9L730.1,802.3Z M731.8,809.1L733.6,806.4L735.1,803.6L736.3,800.7L737.2,797.8L737.8,794.9L738.2,791.9L738.2,789.0L737.9,786.0L737.3,783.1L736.5,780.2L735.3,777.4L733.9,774.6L732.2,771.8L730.2,769.2L728.0,766.6L725.5,764.1L722.8,761.8L719.9,759.5L716.8,757.4L713.5,755.4L710.0,753.6L706.3,751.9L702.5,750.4L698.6,749.0L694.6,747.8L690.4,746.7L686.2,745.8L681.8,745.1L677.5,744.6L673.1,744.2L668.7,744.1L664.3,744.1L659.9,744.3L655.5,744.7L651.2,745.2L647.0,745.9L642.8,746.9L638.7,747.9L634.8,749.2L631.0,750.6L627.3,752.2L623.8,753.9L620.5,755.7L617.4,757.7L614.5,759.9L611.8,762.1L609.3,764.5L607.1,767.0L605.1,769.6L603.4,772.2L601.9,775.0L600.7,777.8L599.8,780.6L599.2,783.6L598.9,786.5L598.9,789.4L599.2,792.4L599.8,795.3L600.7,798.3L601.9,801.2L603.4,804.0L605.1,806.8L607.2,809.5L609.5,812.1L612.1,814.7L614.9,817.1L618.0,819.4L621.4,821.6L624.9,823.6L628.6,825.5L632.6,827.2L636.6,828.7L640.9,830.1L645.3,831.3L649.7,832.3L654.3,833.1L658.9,833.7L663.6,834.1L668.3,834.3L673.0,834.3L677.7,834.0L682.3,833.6L686.9,833.0L691.4,832.1L695.8,831.1L700.0,829.9L704.2,828.5L708.1,826.9L711.9,825.2L715.4,823.3L718.8,821.2L721.9,819.1L724.8,816.7L727.4,814.3L729.7,811.7Z" fill-rule="evenodd" fill="#f0d26a" clip-path="url(#hc4)"/>
<g clip-path="url(#hc4)"><path d="M600.9,765.8L608.5,756.7L738.0,800.0L737.8,805.1L730.7,814.8L600.9,770.8Z" fill="#fbdd6c"/><path d="M600.9,765.8L730.9,809.8L738.0,800.0L608.5,756.7Z" fill="url(#rg4)"/></g>
<path d="M746.2,818.5L746.5,812.8L751.6,805.5L771.4,812.1L771.1,817.9L766.1,825.2Z" fill="#c9a64a"/><path d="M746.5,812.8L766.4,819.5L771.4,812.1L751.6,805.5Z" fill="#f3d264"/>
<path d="M208.3,723.8L754.4,921.4M754.4,921.4L974.1,585.6M974.1,585.6L511.9,461.0M511.9,461.0L208.3,723.8M129.3,115.7L787.2,249.4M787.2,249.4L1036.3,27.1M1036.3,27.1L496.7,-50.3M496.7,-50.3L129.3,115.7M208.3,723.8L129.3,115.7M754.4,921.4L787.2,249.4M974.1,585.6L1036.3,27.1M511.9,461.0L496.7,-50.3" stroke="#3282ff" stroke-width="1" fill="none"/>
<line x1="208.3" y1="723.8" x2="249.3" y2="738.6" stroke="#ff0000" stroke-width="4"/>
<line x1="208.3" y1="723.8" x2="239.8" y2="696.5" stroke="#00ff00" stroke-width="4"/>
<line x1="208.3" y1="723.8" x2="203.0" y2="682.5" stroke="#0000ff" stroke-width="4"/>
</svg>
<div id="hdrL" class="abs">
  <svg class="abs" style="left:12px;top:12px" width="25" height="25" viewBox="0 0 25 25">
    <path d="M1.5,0H22.5A1.5,1.5 0 0 1 24,1.5V17A1.5,1.5 0 0 1 22.5,18.5H16L11.8,23.6L7.5,18.5H1.5A1.5,1.5 0 0 1 0,17V1.5A1.5,1.5 0 0 1 1.5,0Z" fill="#fcc22b"/>
    <circle cx="11.8" cy="9.4" r="6" fill="#fff"/>
    <text x="11.8" y="13.1" font-size="9.5" text-anchor="middle" fill="#0a0a1e" font-family="Liberation Sans">1</text>
  </svg>
  <div class="t" style="left:48px;top:15.3px;font-size:11.1px">Generic PLA</div>
  <div class="t" style="left:48px;top:29.8px;font-size:11.4px;font-weight:bold">0.4mm Nozzle</div>
  <svg class="abs" style="left:1043.3px;top:18px" width="10" height="12" viewBox="0 0 10 12"><path d="M8,1L2,6L8,11" fill="none" stroke="#444" stroke-width="1.5"/></svg>
</div>
<div id="hdrR" class="abs">
  <svg class="abs" style="left:13px;top:16px" width="17" height="16" viewBox="0 0 17 16"><rect x="0.5" y="0" width="15.5" height="5" fill="#08073f"/><rect x="0.5" y="8.3" width="11.5" height="3" fill="#08073f"/><rect x="0.5" y="13.4" width="6" height="1.6" fill="#08073f"/></svg>
  <div class="t" style="left:37.6px;top:17.8px;font-size:13px">Low Quality - 0.28mm</div>
  <svg class="abs" style="left:226px;top:15.6px" width="16" height="16" viewBox="0 0 16 16"><rect x="0.5" y="0.5" width="14.7" height="14.7" fill="none" stroke="#1c1a52" stroke-width="1"/><path d="M0.5,9.5L8.6,0.5M4.7,0.5L15,10.9M10.7,0.5L15,4.7M0.5,9.6L6.2,15M15,6.7L6.2,15M0.5,15L3.4,12.1" fill="none" stroke="#1c1a52" stroke-width="0.9"/></svg>
  <div class="t" style="left:249px;top:18.6px;font-size:12.6px">50%</div>
  <svg class="abs" style="left:299px;top:15.7px" width="16" height="16" viewBox="0 0 16 16"><path d="M3.4,0.9H12.9M4,1.1L4.9,7L4.2,9.5M12.6,1.1L11.5,5.7L14.5,12.6H9.2" fill="none" stroke="#2a285e" stroke-width="0.9"/><path d="M0.3,6H2.9L6.3,10.9H9.3V15.2H0.3Z" fill="#08073f"/></svg>
  <div class="t" style="left:322.4px;top:18.2px;font-size:13.4px;letter-spacing:0.5px">Off</div>
  <svg class="abs" style="left:364px;top:15.7px" width="14" height="16" viewBox="0 0 14 16"><path d="M6.6,0V3M6.6,12.5V15.5" stroke="#08073f" stroke-width="1"/><path d="M4.9,2.2H8.3L6.6,5ZM4.9,13.2H8.3L6.6,10.3Z" fill="#08073f"/><path d="M0.3,5.8Q6.6,7.6 12.9,5.8M0.3,8.6H12.9" fill="none" stroke="#2a285e" stroke-width="0.9"/></svg>
  <div class="t" style="left:386px;top:18.2px;font-size:13.4px;letter-spacing:0.5px">Off</div>
  <svg class="abs" style="left:431px;top:17px" width="12" height="12" viewBox="0 0 12 12"><path d="M1,11L1.8,8L8.5,1.3L10.7,3.5L4,10.2Z" fill="#777"/></svg>
</div>
<div id="navy" class="abs"></div>

<div id="panel" class="abs">
  <div id="ptitle" class="abs">
    <div class="t" style="left:11px;top:10.8px;font-size:13.7px;color:#5e5e5e">Print settings</div>
    <svg class="abs" style="left:431px;top:11px" width="12" height="12" viewBox="0 0 12 12"><path d="M1.3,1.3L10.7,10.7M10.7,1.3L1.3,10.7" stroke="#555" stroke-width="2.3"/></svg>
  </div>
  <div class="t" style="left:12px;top:55.8px;font-size:13.3px">Profile</div>
  <div class="field" style="left:106px;top:48px;width:336px;height:27px;border-radius:3px">
    <div class="t" style="left:11px;top:7.6px;font-size:12px">Low Quality <span style="color:#c4c4c4;font-size:11px">- 0.28mm</span></div>
    <svg class="abs" style="left:285.3px;top:6px" width="13" height="14" viewBox="0 0 13 14"><path d="M6.50,0.60L8.32,4.49L12.59,5.02L9.45,7.96L10.26,12.18L6.50,10.10L2.74,12.18L3.55,7.96L0.41,5.02L4.68,4.49Z" fill="#666" stroke="#666" stroke-width="0.5" stroke-linejoin="round"/></svg>
    <svg class="abs" style="left:311px;top:9px" width="12" height="8" viewBox="0 0 12 8"><path d="M1,1L6,6L11,1" fill="none" stroke="#555" stroke-width="1.5"/></svg>
  </div>
  <div class="field" style="left:24px;top:86.4px;width:361px;height:30px;border-radius:3px">
    <svg class="abs" style="left:6px;top:8px" width="15" height="15" viewBox="0 0 15 15"><circle cx="6" cy="6" r="5" fill="none" stroke="#9a9a9a" stroke-width="1.3"/><path d="M9.5,9.5L13.5,13.5" stroke="#9a9a9a" stroke-width="1.6"/></svg>
    <div class="t" style="left:22px;top:9.5px;font-size:10.9px;font-style:italic;color:#9a9a9a">Search settings</div>
  </div>
  <svg class="abs" style="left:399px;top:96px" width="13" height="11" viewBox="0 0 13 11"><path d="M0,0.8H12.3M0,5.2H12.3M0,9.6H12.3" stroke="#444" stroke-width="1.5"/></svg>
  <div class="cat" style="top:128px"></div>
<div class="cat" style="top:154px"></div>
<div class="cat" style="top:180px"></div>
<svg class="abs" style="left:35px;top:133px" width="16" height="14" viewBox="0 0 16 14"><rect x="0" y="0" width="15" height="5.5" fill="#1a1a1a"/><rect x="0" y="8.7" width="10.9" height="2" fill="#1a1a1a"/><rect x="0" y="13.3" width="5.8" height="1" fill="#1a1a1a"/></svg>
<svg class="abs" style="left:35px;top:158px" width="16" height="16" viewBox="0 0 16 16"><path d="M3,0.7H13M3,0.7L4.5,7.5L0.8,15.3H15.2L11.5,7.5L13,0.7M6,1.5L6.6,7.5L4.2,14.5M10,1.5L9.4,7.5L11.8,14.5" fill="none" stroke="#222" stroke-width="1"/></svg>
<svg class="abs" style="left:35px;top:185px" width="16" height="16" viewBox="0 0 16 16"><rect x="0.5" y="0.5" width="14.5" height="14.5" fill="none" stroke="#222" stroke-width="1"/><path d="M0.5,9.5L8.6,0.5M4.7,0.5L15,10.9M10.7,0.5L15,4.7M0.5,9.6L6.2,15M15,6.7L6.2,15M0.5,15L3.4,12.1" fill="none" stroke="#222" stroke-width="0.9"/></svg>
<div class="t" style="left:67px;top:135px;font-size:13.4px;font-weight:bold">Quality</div>
<div class="t" style="left:67px;top:161px;font-size:13.4px;font-weight:bold">Shell</div>
<div class="t" style="left:67px;top:187px;font-size:13.4px;font-weight:bold">Infill</div>
<svg class="abs" style="left:396px;top:136px" width="8" height="12" viewBox="0 0 8 12"><path d="M6.5,1L1.5,6L6.5,11" fill="none" stroke="#333" stroke-width="1.3"/></svg>
<svg class="abs" style="left:396px;top:162px" width="8" height="12" viewBox="0 0 8 12"><path d="M6.5,1L1.5,6L6.5,11" fill="none" stroke="#333" stroke-width="1.3"/></svg>
<svg class="abs" style="left:394px;top:189px" width="12" height="8" viewBox="0 0 12 8"><path d="M1,1.5L6,6.5L11,1.5" fill="none" stroke="#333" stroke-width="1.3"/></svg>
<div class="abs" style="left:426px;top:128px;width:9px;height:66px;background:#0a0846;border-radius:5px"></div>
<div class="abs" style="left:0;top:207px;width:454px;height:228px;overflow:hidden">
  <div class="lab" style="left:33px;top:7px;font-style:italic;font-size:11.3px">Infill Density</div>
  <svg class="abs" style="left:261px;top:4px" width="15" height="15" viewBox="0 0 15 15"><path d="M2.2,4.5A5.3,5.3 0 1 1 4.5,12.5" fill="none" stroke="#333" stroke-width="1.4"/><path d="M0.3,1.5L1.3,7L5.5,4.5Z" fill="#333"/></svg>
  <div class="field" style="left:286px;top:0;width:132px;height:24px"><div class="lab" style="left:5px;top:7px">50</div><div class="lab" style="right:5px;top:7px;color:#8a8a8a">%</div></div>
  <div class="lab" style="left:50px;top:33px">Infill Line Distance</div>
  <div class="field" style="left:286px;top:26px;width:132px;height:24px"><div class="lab" style="left:5px;top:7px">2.4</div><div class="lab" style="right:5px;top:7px;color:#8a8a8a">mm</div></div>
  <div class="lab" style="left:33px;top:59px">Infill Pattern</div>
  <div class="field" style="left:286px;top:52px;width:132px;height:24px"><div class="lab" style="left:5px;top:8px">Cubic</div><svg class="abs" style="left:108px;top:8px" width="12" height="8" viewBox="0 0 12 8"><path d="M1,1.5L6,6.5L11,1.5" fill="none" stroke="#333" stroke-width="1.3"/></svg></div>
  <div class="lab" style="left:33px;top:85px">Connect Infill Lines</div>
  <div class="field" style="left:286px;top:78px;width:24px;height:24px"></div>
  <div class="lab" style="left:33px;top:111px">Infill Line Directions</div>
  <div class="field" style="left:286px;top:104px;width:132px;height:24px"><div class="lab" style="left:5px;top:7px">[ ]</div></div>
  <div class="lab" style="left:33px;top:137px">Infill X Offset</div>
  <div class="field" style="left:286px;top:130px;width:132px;height:24px"><div class="lab" style="left:5px;top:7px">0</div><div class="lab" style="right:5px;top:7px;color:#8a8a8a">mm</div></div>
  <div class="lab" style="left:33px;top:163px">Infill Y Offset</div>
  <div class="field" style="left:286px;top:156px;width:132px;height:24px"><div class="lab" style="left:5px;top:7px">0</div><div class="lab" style="right:5px;top:7px;color:#8a8a8a">mm</div></div>
  <div class="lab" style="left:33px;top:189px">Randomize Infill Start</div>
  <div class="field" style="left:286px;top:182px;width:24px;height:24px"></div>
  <div class="lab" style="left:33px;top:215px">Infill Line Multiplier</div>
  <div class="field" style="left:286px;top:208px;width:132px;height:24px"><div class="lab" style="left:5px;top:7px">1</div></div>
</div>
<div class="abs" style="left:0;top:435px;width:454px;height:1px;background:#c8c8c8"></div>
<div class="abs" style="left:12px;top:448px;width:132px;height:31px;background:#efefef;border-radius:2px;box-shadow:0 1px 1px #c4c4c4">
  <svg class="abs" style="left:15px;top:10px" width="8" height="12" viewBox="0 0 8 12"><path d="M6.5,1L1.5,6L6.5,11" fill="none" stroke="#196ef0" stroke-width="1.5"/></svg>
  <div class="t" style="left:30px;top:9px;font-size:13.3px;color:#196ef0">Recommended</div>
</div>
<div class="abs" style="left:0;top:489px;width:454px;height:7px;background:#efefef;border-top:1px solid #c8c8c8;border-radius:0 0 2px 2px">
  <svg class="abs" style="left:217px;top:1px" width="20" height="4" viewBox="0 0 20 4"><circle cx="3" cy="2" r="1.3" fill="#333"/><circle cx="9" cy="2" r="1.3" fill="#333"/><circle cx="15" cy="2" r="1.3" fill="#333"/></svg>
</div>

</div>

<div id="card" class="abs">
  <svg class="abs" style="left:20px;top:16px" width="20" height="20" viewBox="0 0 20 20"><circle cx="10" cy="10" r="8.8" fill="none" stroke="#08073f" stroke-width="1.4"/><path d="M10,4.5V10.5L13,13.3" fill="none" stroke="#08073f" stroke-width="1.4"/></svg>
  <div class="t" style="left:45px;top:20px;font-size:13px;font-weight:bold">2 hours 58 minutes</div>
  <svg class="abs" style="left:271px;top:15.2px" width="20" height="20" viewBox="0 0 20 20"><circle cx="10" cy="10" r="9.5" fill="#08073f"/><path d="M10.6,4.2a1.3,1.3 0 1 0 0.01,0Z" fill="#fff"/><path d="M8.3,8.3H11.6L10.3,14.6H11.8L11.5,15.8H7.6L8.8,9.5H8Z" fill="#fff"/></svg>
  <svg class="abs" style="left:22px;top:44px" width="16" height="19" viewBox="0 0 16 19"><path d="M1,0.5V16M15,0.5V16" stroke="#08073f" stroke-width="1.8"/><path d="M4,1V16M7,1V18.5M10,1V16M12.5,1V16" stroke="#08073f" stroke-width="0.8"/></svg>
  <div class="t" style="left:45px;top:49.4px;font-size:11px">33g · 10.97m</div>
  <div class="abs" style="left:20px;top:72px;width:78px;height:32px;background:#efefef;border-radius:2px;box-shadow:0 1px 1px #c8c8c8"><div class="t" style="left:0;width:78px;text-align:center;top:8.6px;font-size:13.2px;color:#196ef0">Preview</div></div>
  <div class="abs" style="left:110px;top:72px;width:180px;height:32px;background:#2672e6;border-radius:2px;box-shadow:inset 0 -1.5px 0 #0e4fc2"><div class="t" style="left:0;width:180px;text-align:center;top:9px;font-size:13px;color:#fff">Save to File</div></div>
</div>
</body></html>
